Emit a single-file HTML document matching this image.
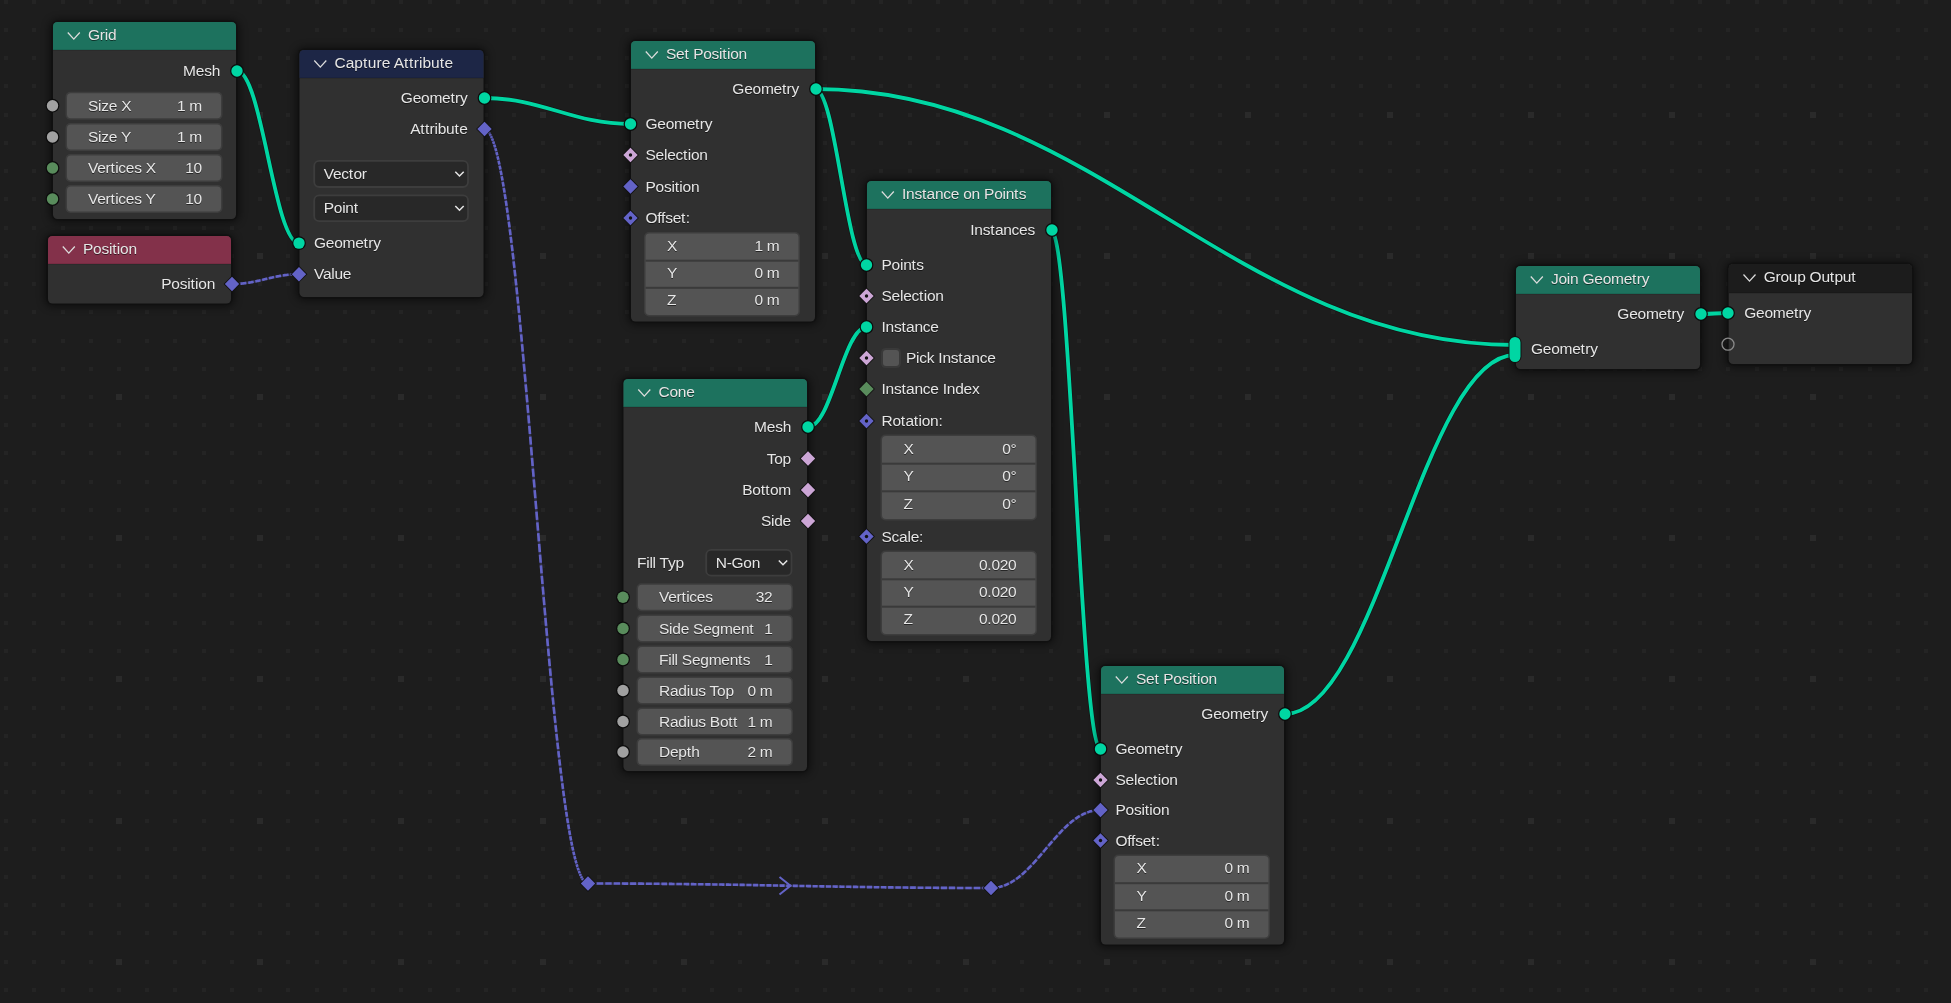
<!DOCTYPE html><html><head><meta charset="utf-8"><style>html,body{margin:0;padding:0;background:#1d1d1d;width:1951px;height:1003px;overflow:hidden}</style></head><body><svg width="1951" height="1003" viewBox="0 0 1951 1003" style="display:block;font-family:'Liberation Sans', sans-serif" opacity="0.999" letter-spacing="-0.25">
<defs><filter id="sh" x="-20%" y="-20%" width="140%" height="140%"><feGaussianBlur stdDeviation="4.5"/></filter>
</defs>
<rect width="1951" height="1003" fill="#1d1d1d"/>
<path d="M4 0h4v4h-4zM4 28h4v4h-4zM4 56h4v4h-4zM4 84h4v4h-4zM4 113h4v4h-4zM4 141h4v4h-4zM4 169h4v4h-4zM4 197h4v4h-4zM4 226h4v4h-4zM4 254h4v4h-4zM4 282h4v4h-4zM4 310h4v4h-4zM4 339h4v4h-4zM4 367h4v4h-4zM4 395h4v4h-4zM4 423h4v4h-4zM4 451h4v4h-4zM4 480h4v4h-4zM4 508h4v4h-4zM4 536h4v4h-4zM4 564h4v4h-4zM4 593h4v4h-4zM4 621h4v4h-4zM4 649h4v4h-4zM4 677h4v4h-4zM4 706h4v4h-4zM4 734h4v4h-4zM4 762h4v4h-4zM4 790h4v4h-4zM4 819h4v4h-4zM4 847h4v4h-4zM4 875h4v4h-4zM4 903h4v4h-4zM4 931h4v4h-4zM4 960h4v4h-4zM4 988h4v4h-4zM32 0h4v4h-4zM32 28h4v4h-4zM32 56h4v4h-4zM32 84h4v4h-4zM32 113h4v4h-4zM32 141h4v4h-4zM32 169h4v4h-4zM32 197h4v4h-4zM32 226h4v4h-4zM32 254h4v4h-4zM32 282h4v4h-4zM32 310h4v4h-4zM32 339h4v4h-4zM32 367h4v4h-4zM32 395h4v4h-4zM32 423h4v4h-4zM32 451h4v4h-4zM32 480h4v4h-4zM32 508h4v4h-4zM32 536h4v4h-4zM32 564h4v4h-4zM32 593h4v4h-4zM32 621h4v4h-4zM32 649h4v4h-4zM32 677h4v4h-4zM32 706h4v4h-4zM32 734h4v4h-4zM32 762h4v4h-4zM32 790h4v4h-4zM32 819h4v4h-4zM32 847h4v4h-4zM32 875h4v4h-4zM32 903h4v4h-4zM32 931h4v4h-4zM32 960h4v4h-4zM32 988h4v4h-4zM61 0h4v4h-4zM61 28h4v4h-4zM61 56h4v4h-4zM61 84h4v4h-4zM61 113h4v4h-4zM61 141h4v4h-4zM61 169h4v4h-4zM61 197h4v4h-4zM61 226h4v4h-4zM61 254h4v4h-4zM61 282h4v4h-4zM61 310h4v4h-4zM61 339h4v4h-4zM61 367h4v4h-4zM61 395h4v4h-4zM61 423h4v4h-4zM61 451h4v4h-4zM61 480h4v4h-4zM61 508h4v4h-4zM61 536h4v4h-4zM61 564h4v4h-4zM61 593h4v4h-4zM61 621h4v4h-4zM61 649h4v4h-4zM61 677h4v4h-4zM61 706h4v4h-4zM61 734h4v4h-4zM61 762h4v4h-4zM61 790h4v4h-4zM61 819h4v4h-4zM61 847h4v4h-4zM61 875h4v4h-4zM61 903h4v4h-4zM61 931h4v4h-4zM61 960h4v4h-4zM61 988h4v4h-4zM89 0h4v4h-4zM89 28h4v4h-4zM89 56h4v4h-4zM89 84h4v4h-4zM89 113h4v4h-4zM89 141h4v4h-4zM89 169h4v4h-4zM89 197h4v4h-4zM89 226h4v4h-4zM89 254h4v4h-4zM89 282h4v4h-4zM89 310h4v4h-4zM89 339h4v4h-4zM89 367h4v4h-4zM89 395h4v4h-4zM89 423h4v4h-4zM89 451h4v4h-4zM89 480h4v4h-4zM89 508h4v4h-4zM89 536h4v4h-4zM89 564h4v4h-4zM89 593h4v4h-4zM89 621h4v4h-4zM89 649h4v4h-4zM89 677h4v4h-4zM89 706h4v4h-4zM89 734h4v4h-4zM89 762h4v4h-4zM89 790h4v4h-4zM89 819h4v4h-4zM89 847h4v4h-4zM89 875h4v4h-4zM89 903h4v4h-4zM89 931h4v4h-4zM89 960h4v4h-4zM89 988h4v4h-4zM117 0h4v4h-4zM117 28h4v4h-4zM117 56h4v4h-4zM117 84h4v4h-4zM117 141h4v4h-4zM117 169h4v4h-4zM117 197h4v4h-4zM117 226h4v4h-4zM117 282h4v4h-4zM117 310h4v4h-4zM117 339h4v4h-4zM117 367h4v4h-4zM117 423h4v4h-4zM117 451h4v4h-4zM117 480h4v4h-4zM117 508h4v4h-4zM117 564h4v4h-4zM117 593h4v4h-4zM117 621h4v4h-4zM117 649h4v4h-4zM117 706h4v4h-4zM117 734h4v4h-4zM117 762h4v4h-4zM117 790h4v4h-4zM117 847h4v4h-4zM117 875h4v4h-4zM117 903h4v4h-4zM117 931h4v4h-4zM117 988h4v4h-4zM145 0h4v4h-4zM145 28h4v4h-4zM145 56h4v4h-4zM145 84h4v4h-4zM145 113h4v4h-4zM145 141h4v4h-4zM145 169h4v4h-4zM145 197h4v4h-4zM145 226h4v4h-4zM145 254h4v4h-4zM145 282h4v4h-4zM145 310h4v4h-4zM145 339h4v4h-4zM145 367h4v4h-4zM145 395h4v4h-4zM145 423h4v4h-4zM145 451h4v4h-4zM145 480h4v4h-4zM145 508h4v4h-4zM145 536h4v4h-4zM145 564h4v4h-4zM145 593h4v4h-4zM145 621h4v4h-4zM145 649h4v4h-4zM145 677h4v4h-4zM145 706h4v4h-4zM145 734h4v4h-4zM145 762h4v4h-4zM145 790h4v4h-4zM145 819h4v4h-4zM145 847h4v4h-4zM145 875h4v4h-4zM145 903h4v4h-4zM145 931h4v4h-4zM145 960h4v4h-4zM145 988h4v4h-4zM173 0h4v4h-4zM173 28h4v4h-4zM173 56h4v4h-4zM173 84h4v4h-4zM173 113h4v4h-4zM173 141h4v4h-4zM173 169h4v4h-4zM173 197h4v4h-4zM173 226h4v4h-4zM173 254h4v4h-4zM173 282h4v4h-4zM173 310h4v4h-4zM173 339h4v4h-4zM173 367h4v4h-4zM173 395h4v4h-4zM173 423h4v4h-4zM173 451h4v4h-4zM173 480h4v4h-4zM173 508h4v4h-4zM173 536h4v4h-4zM173 564h4v4h-4zM173 593h4v4h-4zM173 621h4v4h-4zM173 649h4v4h-4zM173 677h4v4h-4zM173 706h4v4h-4zM173 734h4v4h-4zM173 762h4v4h-4zM173 790h4v4h-4zM173 819h4v4h-4zM173 847h4v4h-4zM173 875h4v4h-4zM173 903h4v4h-4zM173 931h4v4h-4zM173 960h4v4h-4zM173 988h4v4h-4zM202 0h4v4h-4zM202 28h4v4h-4zM202 56h4v4h-4zM202 84h4v4h-4zM202 113h4v4h-4zM202 141h4v4h-4zM202 169h4v4h-4zM202 197h4v4h-4zM202 226h4v4h-4zM202 254h4v4h-4zM202 282h4v4h-4zM202 310h4v4h-4zM202 339h4v4h-4zM202 367h4v4h-4zM202 395h4v4h-4zM202 423h4v4h-4zM202 451h4v4h-4zM202 480h4v4h-4zM202 508h4v4h-4zM202 536h4v4h-4zM202 564h4v4h-4zM202 593h4v4h-4zM202 621h4v4h-4zM202 649h4v4h-4zM202 677h4v4h-4zM202 706h4v4h-4zM202 734h4v4h-4zM202 762h4v4h-4zM202 790h4v4h-4zM202 819h4v4h-4zM202 847h4v4h-4zM202 875h4v4h-4zM202 903h4v4h-4zM202 931h4v4h-4zM202 960h4v4h-4zM202 988h4v4h-4zM230 0h4v4h-4zM230 28h4v4h-4zM230 56h4v4h-4zM230 84h4v4h-4zM230 113h4v4h-4zM230 141h4v4h-4zM230 169h4v4h-4zM230 197h4v4h-4zM230 226h4v4h-4zM230 254h4v4h-4zM230 282h4v4h-4zM230 310h4v4h-4zM230 339h4v4h-4zM230 367h4v4h-4zM230 395h4v4h-4zM230 423h4v4h-4zM230 451h4v4h-4zM230 480h4v4h-4zM230 508h4v4h-4zM230 536h4v4h-4zM230 564h4v4h-4zM230 593h4v4h-4zM230 621h4v4h-4zM230 649h4v4h-4zM230 677h4v4h-4zM230 706h4v4h-4zM230 734h4v4h-4zM230 762h4v4h-4zM230 790h4v4h-4zM230 819h4v4h-4zM230 847h4v4h-4zM230 875h4v4h-4zM230 903h4v4h-4zM230 931h4v4h-4zM230 960h4v4h-4zM230 988h4v4h-4zM258 0h4v4h-4zM258 28h4v4h-4zM258 56h4v4h-4zM258 84h4v4h-4zM258 141h4v4h-4zM258 169h4v4h-4zM258 197h4v4h-4zM258 226h4v4h-4zM258 282h4v4h-4zM258 310h4v4h-4zM258 339h4v4h-4zM258 367h4v4h-4zM258 423h4v4h-4zM258 451h4v4h-4zM258 480h4v4h-4zM258 508h4v4h-4zM258 564h4v4h-4zM258 593h4v4h-4zM258 621h4v4h-4zM258 649h4v4h-4zM258 706h4v4h-4zM258 734h4v4h-4zM258 762h4v4h-4zM258 790h4v4h-4zM258 847h4v4h-4zM258 875h4v4h-4zM258 903h4v4h-4zM258 931h4v4h-4zM258 988h4v4h-4zM286 0h4v4h-4zM286 28h4v4h-4zM286 56h4v4h-4zM286 84h4v4h-4zM286 113h4v4h-4zM286 141h4v4h-4zM286 169h4v4h-4zM286 197h4v4h-4zM286 226h4v4h-4zM286 254h4v4h-4zM286 282h4v4h-4zM286 310h4v4h-4zM286 339h4v4h-4zM286 367h4v4h-4zM286 395h4v4h-4zM286 423h4v4h-4zM286 451h4v4h-4zM286 480h4v4h-4zM286 508h4v4h-4zM286 536h4v4h-4zM286 564h4v4h-4zM286 593h4v4h-4zM286 621h4v4h-4zM286 649h4v4h-4zM286 677h4v4h-4zM286 706h4v4h-4zM286 734h4v4h-4zM286 762h4v4h-4zM286 790h4v4h-4zM286 819h4v4h-4zM286 847h4v4h-4zM286 875h4v4h-4zM286 903h4v4h-4zM286 931h4v4h-4zM286 960h4v4h-4zM286 988h4v4h-4zM315 0h4v4h-4zM315 28h4v4h-4zM315 56h4v4h-4zM315 84h4v4h-4zM315 113h4v4h-4zM315 141h4v4h-4zM315 169h4v4h-4zM315 197h4v4h-4zM315 226h4v4h-4zM315 254h4v4h-4zM315 282h4v4h-4zM315 310h4v4h-4zM315 339h4v4h-4zM315 367h4v4h-4zM315 395h4v4h-4zM315 423h4v4h-4zM315 451h4v4h-4zM315 480h4v4h-4zM315 508h4v4h-4zM315 536h4v4h-4zM315 564h4v4h-4zM315 593h4v4h-4zM315 621h4v4h-4zM315 649h4v4h-4zM315 677h4v4h-4zM315 706h4v4h-4zM315 734h4v4h-4zM315 762h4v4h-4zM315 790h4v4h-4zM315 819h4v4h-4zM315 847h4v4h-4zM315 875h4v4h-4zM315 903h4v4h-4zM315 931h4v4h-4zM315 960h4v4h-4zM315 988h4v4h-4zM343 0h4v4h-4zM343 28h4v4h-4zM343 56h4v4h-4zM343 84h4v4h-4zM343 113h4v4h-4zM343 141h4v4h-4zM343 169h4v4h-4zM343 197h4v4h-4zM343 226h4v4h-4zM343 254h4v4h-4zM343 282h4v4h-4zM343 310h4v4h-4zM343 339h4v4h-4zM343 367h4v4h-4zM343 395h4v4h-4zM343 423h4v4h-4zM343 451h4v4h-4zM343 480h4v4h-4zM343 508h4v4h-4zM343 536h4v4h-4zM343 564h4v4h-4zM343 593h4v4h-4zM343 621h4v4h-4zM343 649h4v4h-4zM343 677h4v4h-4zM343 706h4v4h-4zM343 734h4v4h-4zM343 762h4v4h-4zM343 790h4v4h-4zM343 819h4v4h-4zM343 847h4v4h-4zM343 875h4v4h-4zM343 903h4v4h-4zM343 931h4v4h-4zM343 960h4v4h-4zM343 988h4v4h-4zM371 0h4v4h-4zM371 28h4v4h-4zM371 56h4v4h-4zM371 84h4v4h-4zM371 113h4v4h-4zM371 141h4v4h-4zM371 169h4v4h-4zM371 197h4v4h-4zM371 226h4v4h-4zM371 254h4v4h-4zM371 282h4v4h-4zM371 310h4v4h-4zM371 339h4v4h-4zM371 367h4v4h-4zM371 395h4v4h-4zM371 423h4v4h-4zM371 451h4v4h-4zM371 480h4v4h-4zM371 508h4v4h-4zM371 536h4v4h-4zM371 564h4v4h-4zM371 593h4v4h-4zM371 621h4v4h-4zM371 649h4v4h-4zM371 677h4v4h-4zM371 706h4v4h-4zM371 734h4v4h-4zM371 762h4v4h-4zM371 790h4v4h-4zM371 819h4v4h-4zM371 847h4v4h-4zM371 875h4v4h-4zM371 903h4v4h-4zM371 931h4v4h-4zM371 960h4v4h-4zM371 988h4v4h-4zM399 0h4v4h-4zM399 28h4v4h-4zM399 56h4v4h-4zM399 84h4v4h-4zM399 141h4v4h-4zM399 169h4v4h-4zM399 197h4v4h-4zM399 226h4v4h-4zM399 282h4v4h-4zM399 310h4v4h-4zM399 339h4v4h-4zM399 367h4v4h-4zM399 423h4v4h-4zM399 451h4v4h-4zM399 480h4v4h-4zM399 508h4v4h-4zM399 564h4v4h-4zM399 593h4v4h-4zM399 621h4v4h-4zM399 649h4v4h-4zM399 706h4v4h-4zM399 734h4v4h-4zM399 762h4v4h-4zM399 790h4v4h-4zM399 847h4v4h-4zM399 875h4v4h-4zM399 903h4v4h-4zM399 931h4v4h-4zM399 988h4v4h-4zM428 0h4v4h-4zM428 28h4v4h-4zM428 56h4v4h-4zM428 84h4v4h-4zM428 113h4v4h-4zM428 141h4v4h-4zM428 169h4v4h-4zM428 197h4v4h-4zM428 226h4v4h-4zM428 254h4v4h-4zM428 282h4v4h-4zM428 310h4v4h-4zM428 339h4v4h-4zM428 367h4v4h-4zM428 395h4v4h-4zM428 423h4v4h-4zM428 451h4v4h-4zM428 480h4v4h-4zM428 508h4v4h-4zM428 536h4v4h-4zM428 564h4v4h-4zM428 593h4v4h-4zM428 621h4v4h-4zM428 649h4v4h-4zM428 677h4v4h-4zM428 706h4v4h-4zM428 734h4v4h-4zM428 762h4v4h-4zM428 790h4v4h-4zM428 819h4v4h-4zM428 847h4v4h-4zM428 875h4v4h-4zM428 903h4v4h-4zM428 931h4v4h-4zM428 960h4v4h-4zM428 988h4v4h-4zM456 0h4v4h-4zM456 28h4v4h-4zM456 56h4v4h-4zM456 84h4v4h-4zM456 113h4v4h-4zM456 141h4v4h-4zM456 169h4v4h-4zM456 197h4v4h-4zM456 226h4v4h-4zM456 254h4v4h-4zM456 282h4v4h-4zM456 310h4v4h-4zM456 339h4v4h-4zM456 367h4v4h-4zM456 395h4v4h-4zM456 423h4v4h-4zM456 451h4v4h-4zM456 480h4v4h-4zM456 508h4v4h-4zM456 536h4v4h-4zM456 564h4v4h-4zM456 593h4v4h-4zM456 621h4v4h-4zM456 649h4v4h-4zM456 677h4v4h-4zM456 706h4v4h-4zM456 734h4v4h-4zM456 762h4v4h-4zM456 790h4v4h-4zM456 819h4v4h-4zM456 847h4v4h-4zM456 875h4v4h-4zM456 903h4v4h-4zM456 931h4v4h-4zM456 960h4v4h-4zM456 988h4v4h-4zM484 0h4v4h-4zM484 28h4v4h-4zM484 56h4v4h-4zM484 84h4v4h-4zM484 113h4v4h-4zM484 141h4v4h-4zM484 169h4v4h-4zM484 197h4v4h-4zM484 226h4v4h-4zM484 254h4v4h-4zM484 282h4v4h-4zM484 310h4v4h-4zM484 339h4v4h-4zM484 367h4v4h-4zM484 395h4v4h-4zM484 423h4v4h-4zM484 451h4v4h-4zM484 480h4v4h-4zM484 508h4v4h-4zM484 536h4v4h-4zM484 564h4v4h-4zM484 593h4v4h-4zM484 621h4v4h-4zM484 649h4v4h-4zM484 677h4v4h-4zM484 706h4v4h-4zM484 734h4v4h-4zM484 762h4v4h-4zM484 790h4v4h-4zM484 819h4v4h-4zM484 847h4v4h-4zM484 875h4v4h-4zM484 903h4v4h-4zM484 931h4v4h-4zM484 960h4v4h-4zM484 988h4v4h-4zM512 0h4v4h-4zM512 28h4v4h-4zM512 56h4v4h-4zM512 84h4v4h-4zM512 113h4v4h-4zM512 141h4v4h-4zM512 169h4v4h-4zM512 197h4v4h-4zM512 226h4v4h-4zM512 254h4v4h-4zM512 282h4v4h-4zM512 310h4v4h-4zM512 339h4v4h-4zM512 367h4v4h-4zM512 395h4v4h-4zM512 423h4v4h-4zM512 451h4v4h-4zM512 480h4v4h-4zM512 508h4v4h-4zM512 536h4v4h-4zM512 564h4v4h-4zM512 593h4v4h-4zM512 621h4v4h-4zM512 649h4v4h-4zM512 677h4v4h-4zM512 706h4v4h-4zM512 734h4v4h-4zM512 762h4v4h-4zM512 790h4v4h-4zM512 819h4v4h-4zM512 847h4v4h-4zM512 875h4v4h-4zM512 903h4v4h-4zM512 931h4v4h-4zM512 960h4v4h-4zM512 988h4v4h-4zM541 0h4v4h-4zM541 28h4v4h-4zM541 56h4v4h-4zM541 84h4v4h-4zM541 141h4v4h-4zM541 169h4v4h-4zM541 197h4v4h-4zM541 226h4v4h-4zM541 282h4v4h-4zM541 310h4v4h-4zM541 339h4v4h-4zM541 367h4v4h-4zM541 423h4v4h-4zM541 451h4v4h-4zM541 480h4v4h-4zM541 508h4v4h-4zM541 564h4v4h-4zM541 593h4v4h-4zM541 621h4v4h-4zM541 649h4v4h-4zM541 706h4v4h-4zM541 734h4v4h-4zM541 762h4v4h-4zM541 790h4v4h-4zM541 847h4v4h-4zM541 875h4v4h-4zM541 903h4v4h-4zM541 931h4v4h-4zM541 988h4v4h-4zM569 0h4v4h-4zM569 28h4v4h-4zM569 56h4v4h-4zM569 84h4v4h-4zM569 113h4v4h-4zM569 141h4v4h-4zM569 169h4v4h-4zM569 197h4v4h-4zM569 226h4v4h-4zM569 254h4v4h-4zM569 282h4v4h-4zM569 310h4v4h-4zM569 339h4v4h-4zM569 367h4v4h-4zM569 395h4v4h-4zM569 423h4v4h-4zM569 451h4v4h-4zM569 480h4v4h-4zM569 508h4v4h-4zM569 536h4v4h-4zM569 564h4v4h-4zM569 593h4v4h-4zM569 621h4v4h-4zM569 649h4v4h-4zM569 677h4v4h-4zM569 706h4v4h-4zM569 734h4v4h-4zM569 762h4v4h-4zM569 790h4v4h-4zM569 819h4v4h-4zM569 847h4v4h-4zM569 875h4v4h-4zM569 903h4v4h-4zM569 931h4v4h-4zM569 960h4v4h-4zM569 988h4v4h-4zM597 0h4v4h-4zM597 28h4v4h-4zM597 56h4v4h-4zM597 84h4v4h-4zM597 113h4v4h-4zM597 141h4v4h-4zM597 169h4v4h-4zM597 197h4v4h-4zM597 226h4v4h-4zM597 254h4v4h-4zM597 282h4v4h-4zM597 310h4v4h-4zM597 339h4v4h-4zM597 367h4v4h-4zM597 395h4v4h-4zM597 423h4v4h-4zM597 451h4v4h-4zM597 480h4v4h-4zM597 508h4v4h-4zM597 536h4v4h-4zM597 564h4v4h-4zM597 593h4v4h-4zM597 621h4v4h-4zM597 649h4v4h-4zM597 677h4v4h-4zM597 706h4v4h-4zM597 734h4v4h-4zM597 762h4v4h-4zM597 790h4v4h-4zM597 819h4v4h-4zM597 847h4v4h-4zM597 875h4v4h-4zM597 903h4v4h-4zM597 931h4v4h-4zM597 960h4v4h-4zM597 988h4v4h-4zM625 0h4v4h-4zM625 28h4v4h-4zM625 56h4v4h-4zM625 84h4v4h-4zM625 113h4v4h-4zM625 141h4v4h-4zM625 169h4v4h-4zM625 197h4v4h-4zM625 226h4v4h-4zM625 254h4v4h-4zM625 282h4v4h-4zM625 310h4v4h-4zM625 339h4v4h-4zM625 367h4v4h-4zM625 395h4v4h-4zM625 423h4v4h-4zM625 451h4v4h-4zM625 480h4v4h-4zM625 508h4v4h-4zM625 536h4v4h-4zM625 564h4v4h-4zM625 593h4v4h-4zM625 621h4v4h-4zM625 649h4v4h-4zM625 677h4v4h-4zM625 706h4v4h-4zM625 734h4v4h-4zM625 762h4v4h-4zM625 790h4v4h-4zM625 819h4v4h-4zM625 847h4v4h-4zM625 875h4v4h-4zM625 903h4v4h-4zM625 931h4v4h-4zM625 960h4v4h-4zM625 988h4v4h-4zM653 0h4v4h-4zM653 28h4v4h-4zM653 56h4v4h-4zM653 84h4v4h-4zM653 113h4v4h-4zM653 141h4v4h-4zM653 169h4v4h-4zM653 197h4v4h-4zM653 226h4v4h-4zM653 254h4v4h-4zM653 282h4v4h-4zM653 310h4v4h-4zM653 339h4v4h-4zM653 367h4v4h-4zM653 395h4v4h-4zM653 423h4v4h-4zM653 451h4v4h-4zM653 480h4v4h-4zM653 508h4v4h-4zM653 536h4v4h-4zM653 564h4v4h-4zM653 593h4v4h-4zM653 621h4v4h-4zM653 649h4v4h-4zM653 677h4v4h-4zM653 706h4v4h-4zM653 734h4v4h-4zM653 762h4v4h-4zM653 790h4v4h-4zM653 819h4v4h-4zM653 847h4v4h-4zM653 875h4v4h-4zM653 903h4v4h-4zM653 931h4v4h-4zM653 960h4v4h-4zM653 988h4v4h-4zM682 0h4v4h-4zM682 28h4v4h-4zM682 56h4v4h-4zM682 84h4v4h-4zM682 141h4v4h-4zM682 169h4v4h-4zM682 197h4v4h-4zM682 226h4v4h-4zM682 282h4v4h-4zM682 310h4v4h-4zM682 339h4v4h-4zM682 367h4v4h-4zM682 423h4v4h-4zM682 451h4v4h-4zM682 480h4v4h-4zM682 508h4v4h-4zM682 564h4v4h-4zM682 593h4v4h-4zM682 621h4v4h-4zM682 649h4v4h-4zM682 706h4v4h-4zM682 734h4v4h-4zM682 762h4v4h-4zM682 790h4v4h-4zM682 847h4v4h-4zM682 875h4v4h-4zM682 903h4v4h-4zM682 931h4v4h-4zM682 988h4v4h-4zM710 0h4v4h-4zM710 28h4v4h-4zM710 56h4v4h-4zM710 84h4v4h-4zM710 113h4v4h-4zM710 141h4v4h-4zM710 169h4v4h-4zM710 197h4v4h-4zM710 226h4v4h-4zM710 254h4v4h-4zM710 282h4v4h-4zM710 310h4v4h-4zM710 339h4v4h-4zM710 367h4v4h-4zM710 395h4v4h-4zM710 423h4v4h-4zM710 451h4v4h-4zM710 480h4v4h-4zM710 508h4v4h-4zM710 536h4v4h-4zM710 564h4v4h-4zM710 593h4v4h-4zM710 621h4v4h-4zM710 649h4v4h-4zM710 677h4v4h-4zM710 706h4v4h-4zM710 734h4v4h-4zM710 762h4v4h-4zM710 790h4v4h-4zM710 819h4v4h-4zM710 847h4v4h-4zM710 875h4v4h-4zM710 903h4v4h-4zM710 931h4v4h-4zM710 960h4v4h-4zM710 988h4v4h-4zM738 0h4v4h-4zM738 28h4v4h-4zM738 56h4v4h-4zM738 84h4v4h-4zM738 113h4v4h-4zM738 141h4v4h-4zM738 169h4v4h-4zM738 197h4v4h-4zM738 226h4v4h-4zM738 254h4v4h-4zM738 282h4v4h-4zM738 310h4v4h-4zM738 339h4v4h-4zM738 367h4v4h-4zM738 395h4v4h-4zM738 423h4v4h-4zM738 451h4v4h-4zM738 480h4v4h-4zM738 508h4v4h-4zM738 536h4v4h-4zM738 564h4v4h-4zM738 593h4v4h-4zM738 621h4v4h-4zM738 649h4v4h-4zM738 677h4v4h-4zM738 706h4v4h-4zM738 734h4v4h-4zM738 762h4v4h-4zM738 790h4v4h-4zM738 819h4v4h-4zM738 847h4v4h-4zM738 875h4v4h-4zM738 903h4v4h-4zM738 931h4v4h-4zM738 960h4v4h-4zM738 988h4v4h-4zM766 0h4v4h-4zM766 28h4v4h-4zM766 56h4v4h-4zM766 84h4v4h-4zM766 113h4v4h-4zM766 141h4v4h-4zM766 169h4v4h-4zM766 197h4v4h-4zM766 226h4v4h-4zM766 254h4v4h-4zM766 282h4v4h-4zM766 310h4v4h-4zM766 339h4v4h-4zM766 367h4v4h-4zM766 395h4v4h-4zM766 423h4v4h-4zM766 451h4v4h-4zM766 480h4v4h-4zM766 508h4v4h-4zM766 536h4v4h-4zM766 564h4v4h-4zM766 593h4v4h-4zM766 621h4v4h-4zM766 649h4v4h-4zM766 677h4v4h-4zM766 706h4v4h-4zM766 734h4v4h-4zM766 762h4v4h-4zM766 790h4v4h-4zM766 819h4v4h-4zM766 847h4v4h-4zM766 875h4v4h-4zM766 903h4v4h-4zM766 931h4v4h-4zM766 960h4v4h-4zM766 988h4v4h-4zM795 0h4v4h-4zM795 28h4v4h-4zM795 56h4v4h-4zM795 84h4v4h-4zM795 113h4v4h-4zM795 141h4v4h-4zM795 169h4v4h-4zM795 197h4v4h-4zM795 226h4v4h-4zM795 254h4v4h-4zM795 282h4v4h-4zM795 310h4v4h-4zM795 339h4v4h-4zM795 367h4v4h-4zM795 395h4v4h-4zM795 423h4v4h-4zM795 451h4v4h-4zM795 480h4v4h-4zM795 508h4v4h-4zM795 536h4v4h-4zM795 564h4v4h-4zM795 593h4v4h-4zM795 621h4v4h-4zM795 649h4v4h-4zM795 677h4v4h-4zM795 706h4v4h-4zM795 734h4v4h-4zM795 762h4v4h-4zM795 790h4v4h-4zM795 819h4v4h-4zM795 847h4v4h-4zM795 875h4v4h-4zM795 903h4v4h-4zM795 931h4v4h-4zM795 960h4v4h-4zM795 988h4v4h-4zM823 0h4v4h-4zM823 28h4v4h-4zM823 56h4v4h-4zM823 84h4v4h-4zM823 141h4v4h-4zM823 169h4v4h-4zM823 197h4v4h-4zM823 226h4v4h-4zM823 282h4v4h-4zM823 310h4v4h-4zM823 339h4v4h-4zM823 367h4v4h-4zM823 423h4v4h-4zM823 451h4v4h-4zM823 480h4v4h-4zM823 508h4v4h-4zM823 564h4v4h-4zM823 593h4v4h-4zM823 621h4v4h-4zM823 649h4v4h-4zM823 706h4v4h-4zM823 734h4v4h-4zM823 762h4v4h-4zM823 790h4v4h-4zM823 847h4v4h-4zM823 875h4v4h-4zM823 903h4v4h-4zM823 931h4v4h-4zM823 988h4v4h-4zM851 0h4v4h-4zM851 28h4v4h-4zM851 56h4v4h-4zM851 84h4v4h-4zM851 113h4v4h-4zM851 141h4v4h-4zM851 169h4v4h-4zM851 197h4v4h-4zM851 226h4v4h-4zM851 254h4v4h-4zM851 282h4v4h-4zM851 310h4v4h-4zM851 339h4v4h-4zM851 367h4v4h-4zM851 395h4v4h-4zM851 423h4v4h-4zM851 451h4v4h-4zM851 480h4v4h-4zM851 508h4v4h-4zM851 536h4v4h-4zM851 564h4v4h-4zM851 593h4v4h-4zM851 621h4v4h-4zM851 649h4v4h-4zM851 677h4v4h-4zM851 706h4v4h-4zM851 734h4v4h-4zM851 762h4v4h-4zM851 790h4v4h-4zM851 819h4v4h-4zM851 847h4v4h-4zM851 875h4v4h-4zM851 903h4v4h-4zM851 931h4v4h-4zM851 960h4v4h-4zM851 988h4v4h-4zM879 0h4v4h-4zM879 28h4v4h-4zM879 56h4v4h-4zM879 84h4v4h-4zM879 113h4v4h-4zM879 141h4v4h-4zM879 169h4v4h-4zM879 197h4v4h-4zM879 226h4v4h-4zM879 254h4v4h-4zM879 282h4v4h-4zM879 310h4v4h-4zM879 339h4v4h-4zM879 367h4v4h-4zM879 395h4v4h-4zM879 423h4v4h-4zM879 451h4v4h-4zM879 480h4v4h-4zM879 508h4v4h-4zM879 536h4v4h-4zM879 564h4v4h-4zM879 593h4v4h-4zM879 621h4v4h-4zM879 649h4v4h-4zM879 677h4v4h-4zM879 706h4v4h-4zM879 734h4v4h-4zM879 762h4v4h-4zM879 790h4v4h-4zM879 819h4v4h-4zM879 847h4v4h-4zM879 875h4v4h-4zM879 903h4v4h-4zM879 931h4v4h-4zM879 960h4v4h-4zM879 988h4v4h-4zM908 0h4v4h-4zM908 28h4v4h-4zM908 56h4v4h-4zM908 84h4v4h-4zM908 113h4v4h-4zM908 141h4v4h-4zM908 169h4v4h-4zM908 197h4v4h-4zM908 226h4v4h-4zM908 254h4v4h-4zM908 282h4v4h-4zM908 310h4v4h-4zM908 339h4v4h-4zM908 367h4v4h-4zM908 395h4v4h-4zM908 423h4v4h-4zM908 451h4v4h-4zM908 480h4v4h-4zM908 508h4v4h-4zM908 536h4v4h-4zM908 564h4v4h-4zM908 593h4v4h-4zM908 621h4v4h-4zM908 649h4v4h-4zM908 677h4v4h-4zM908 706h4v4h-4zM908 734h4v4h-4zM908 762h4v4h-4zM908 790h4v4h-4zM908 819h4v4h-4zM908 847h4v4h-4zM908 875h4v4h-4zM908 903h4v4h-4zM908 931h4v4h-4zM908 960h4v4h-4zM908 988h4v4h-4zM936 0h4v4h-4zM936 28h4v4h-4zM936 56h4v4h-4zM936 84h4v4h-4zM936 113h4v4h-4zM936 141h4v4h-4zM936 169h4v4h-4zM936 197h4v4h-4zM936 226h4v4h-4zM936 254h4v4h-4zM936 282h4v4h-4zM936 310h4v4h-4zM936 339h4v4h-4zM936 367h4v4h-4zM936 395h4v4h-4zM936 423h4v4h-4zM936 451h4v4h-4zM936 480h4v4h-4zM936 508h4v4h-4zM936 536h4v4h-4zM936 564h4v4h-4zM936 593h4v4h-4zM936 621h4v4h-4zM936 649h4v4h-4zM936 677h4v4h-4zM936 706h4v4h-4zM936 734h4v4h-4zM936 762h4v4h-4zM936 790h4v4h-4zM936 819h4v4h-4zM936 847h4v4h-4zM936 875h4v4h-4zM936 903h4v4h-4zM936 931h4v4h-4zM936 960h4v4h-4zM936 988h4v4h-4zM964 0h4v4h-4zM964 28h4v4h-4zM964 56h4v4h-4zM964 84h4v4h-4zM964 141h4v4h-4zM964 169h4v4h-4zM964 197h4v4h-4zM964 226h4v4h-4zM964 282h4v4h-4zM964 310h4v4h-4zM964 339h4v4h-4zM964 367h4v4h-4zM964 423h4v4h-4zM964 451h4v4h-4zM964 480h4v4h-4zM964 508h4v4h-4zM964 564h4v4h-4zM964 593h4v4h-4zM964 621h4v4h-4zM964 649h4v4h-4zM964 706h4v4h-4zM964 734h4v4h-4zM964 762h4v4h-4zM964 790h4v4h-4zM964 847h4v4h-4zM964 875h4v4h-4zM964 903h4v4h-4zM964 931h4v4h-4zM964 988h4v4h-4zM992 0h4v4h-4zM992 28h4v4h-4zM992 56h4v4h-4zM992 84h4v4h-4zM992 113h4v4h-4zM992 141h4v4h-4zM992 169h4v4h-4zM992 197h4v4h-4zM992 226h4v4h-4zM992 254h4v4h-4zM992 282h4v4h-4zM992 310h4v4h-4zM992 339h4v4h-4zM992 367h4v4h-4zM992 395h4v4h-4zM992 423h4v4h-4zM992 451h4v4h-4zM992 480h4v4h-4zM992 508h4v4h-4zM992 536h4v4h-4zM992 564h4v4h-4zM992 593h4v4h-4zM992 621h4v4h-4zM992 649h4v4h-4zM992 677h4v4h-4zM992 706h4v4h-4zM992 734h4v4h-4zM992 762h4v4h-4zM992 790h4v4h-4zM992 819h4v4h-4zM992 847h4v4h-4zM992 875h4v4h-4zM992 903h4v4h-4zM992 931h4v4h-4zM992 960h4v4h-4zM992 988h4v4h-4zM1020 0h4v4h-4zM1020 28h4v4h-4zM1020 56h4v4h-4zM1020 84h4v4h-4zM1020 113h4v4h-4zM1020 141h4v4h-4zM1020 169h4v4h-4zM1020 197h4v4h-4zM1020 226h4v4h-4zM1020 254h4v4h-4zM1020 282h4v4h-4zM1020 310h4v4h-4zM1020 339h4v4h-4zM1020 367h4v4h-4zM1020 395h4v4h-4zM1020 423h4v4h-4zM1020 451h4v4h-4zM1020 480h4v4h-4zM1020 508h4v4h-4zM1020 536h4v4h-4zM1020 564h4v4h-4zM1020 593h4v4h-4zM1020 621h4v4h-4zM1020 649h4v4h-4zM1020 677h4v4h-4zM1020 706h4v4h-4zM1020 734h4v4h-4zM1020 762h4v4h-4zM1020 790h4v4h-4zM1020 819h4v4h-4zM1020 847h4v4h-4zM1020 875h4v4h-4zM1020 903h4v4h-4zM1020 931h4v4h-4zM1020 960h4v4h-4zM1020 988h4v4h-4zM1049 0h4v4h-4zM1049 28h4v4h-4zM1049 56h4v4h-4zM1049 84h4v4h-4zM1049 113h4v4h-4zM1049 141h4v4h-4zM1049 169h4v4h-4zM1049 197h4v4h-4zM1049 226h4v4h-4zM1049 254h4v4h-4zM1049 282h4v4h-4zM1049 310h4v4h-4zM1049 339h4v4h-4zM1049 367h4v4h-4zM1049 395h4v4h-4zM1049 423h4v4h-4zM1049 451h4v4h-4zM1049 480h4v4h-4zM1049 508h4v4h-4zM1049 536h4v4h-4zM1049 564h4v4h-4zM1049 593h4v4h-4zM1049 621h4v4h-4zM1049 649h4v4h-4zM1049 677h4v4h-4zM1049 706h4v4h-4zM1049 734h4v4h-4zM1049 762h4v4h-4zM1049 790h4v4h-4zM1049 819h4v4h-4zM1049 847h4v4h-4zM1049 875h4v4h-4zM1049 903h4v4h-4zM1049 931h4v4h-4zM1049 960h4v4h-4zM1049 988h4v4h-4zM1077 0h4v4h-4zM1077 28h4v4h-4zM1077 56h4v4h-4zM1077 84h4v4h-4zM1077 113h4v4h-4zM1077 141h4v4h-4zM1077 169h4v4h-4zM1077 197h4v4h-4zM1077 226h4v4h-4zM1077 254h4v4h-4zM1077 282h4v4h-4zM1077 310h4v4h-4zM1077 339h4v4h-4zM1077 367h4v4h-4zM1077 395h4v4h-4zM1077 423h4v4h-4zM1077 451h4v4h-4zM1077 480h4v4h-4zM1077 508h4v4h-4zM1077 536h4v4h-4zM1077 564h4v4h-4zM1077 593h4v4h-4zM1077 621h4v4h-4zM1077 649h4v4h-4zM1077 677h4v4h-4zM1077 706h4v4h-4zM1077 734h4v4h-4zM1077 762h4v4h-4zM1077 790h4v4h-4zM1077 819h4v4h-4zM1077 847h4v4h-4zM1077 875h4v4h-4zM1077 903h4v4h-4zM1077 931h4v4h-4zM1077 960h4v4h-4zM1077 988h4v4h-4zM1105 0h4v4h-4zM1105 28h4v4h-4zM1105 56h4v4h-4zM1105 84h4v4h-4zM1105 141h4v4h-4zM1105 169h4v4h-4zM1105 197h4v4h-4zM1105 226h4v4h-4zM1105 282h4v4h-4zM1105 310h4v4h-4zM1105 339h4v4h-4zM1105 367h4v4h-4zM1105 423h4v4h-4zM1105 451h4v4h-4zM1105 480h4v4h-4zM1105 508h4v4h-4zM1105 564h4v4h-4zM1105 593h4v4h-4zM1105 621h4v4h-4zM1105 649h4v4h-4zM1105 706h4v4h-4zM1105 734h4v4h-4zM1105 762h4v4h-4zM1105 790h4v4h-4zM1105 847h4v4h-4zM1105 875h4v4h-4zM1105 903h4v4h-4zM1105 931h4v4h-4zM1105 988h4v4h-4zM1133 0h4v4h-4zM1133 28h4v4h-4zM1133 56h4v4h-4zM1133 84h4v4h-4zM1133 113h4v4h-4zM1133 141h4v4h-4zM1133 169h4v4h-4zM1133 197h4v4h-4zM1133 226h4v4h-4zM1133 254h4v4h-4zM1133 282h4v4h-4zM1133 310h4v4h-4zM1133 339h4v4h-4zM1133 367h4v4h-4zM1133 395h4v4h-4zM1133 423h4v4h-4zM1133 451h4v4h-4zM1133 480h4v4h-4zM1133 508h4v4h-4zM1133 536h4v4h-4zM1133 564h4v4h-4zM1133 593h4v4h-4zM1133 621h4v4h-4zM1133 649h4v4h-4zM1133 677h4v4h-4zM1133 706h4v4h-4zM1133 734h4v4h-4zM1133 762h4v4h-4zM1133 790h4v4h-4zM1133 819h4v4h-4zM1133 847h4v4h-4zM1133 875h4v4h-4zM1133 903h4v4h-4zM1133 931h4v4h-4zM1133 960h4v4h-4zM1133 988h4v4h-4zM1162 0h4v4h-4zM1162 28h4v4h-4zM1162 56h4v4h-4zM1162 84h4v4h-4zM1162 113h4v4h-4zM1162 141h4v4h-4zM1162 169h4v4h-4zM1162 197h4v4h-4zM1162 226h4v4h-4zM1162 254h4v4h-4zM1162 282h4v4h-4zM1162 310h4v4h-4zM1162 339h4v4h-4zM1162 367h4v4h-4zM1162 395h4v4h-4zM1162 423h4v4h-4zM1162 451h4v4h-4zM1162 480h4v4h-4zM1162 508h4v4h-4zM1162 536h4v4h-4zM1162 564h4v4h-4zM1162 593h4v4h-4zM1162 621h4v4h-4zM1162 649h4v4h-4zM1162 677h4v4h-4zM1162 706h4v4h-4zM1162 734h4v4h-4zM1162 762h4v4h-4zM1162 790h4v4h-4zM1162 819h4v4h-4zM1162 847h4v4h-4zM1162 875h4v4h-4zM1162 903h4v4h-4zM1162 931h4v4h-4zM1162 960h4v4h-4zM1162 988h4v4h-4zM1190 0h4v4h-4zM1190 28h4v4h-4zM1190 56h4v4h-4zM1190 84h4v4h-4zM1190 113h4v4h-4zM1190 141h4v4h-4zM1190 169h4v4h-4zM1190 197h4v4h-4zM1190 226h4v4h-4zM1190 254h4v4h-4zM1190 282h4v4h-4zM1190 310h4v4h-4zM1190 339h4v4h-4zM1190 367h4v4h-4zM1190 395h4v4h-4zM1190 423h4v4h-4zM1190 451h4v4h-4zM1190 480h4v4h-4zM1190 508h4v4h-4zM1190 536h4v4h-4zM1190 564h4v4h-4zM1190 593h4v4h-4zM1190 621h4v4h-4zM1190 649h4v4h-4zM1190 677h4v4h-4zM1190 706h4v4h-4zM1190 734h4v4h-4zM1190 762h4v4h-4zM1190 790h4v4h-4zM1190 819h4v4h-4zM1190 847h4v4h-4zM1190 875h4v4h-4zM1190 903h4v4h-4zM1190 931h4v4h-4zM1190 960h4v4h-4zM1190 988h4v4h-4zM1218 0h4v4h-4zM1218 28h4v4h-4zM1218 56h4v4h-4zM1218 84h4v4h-4zM1218 113h4v4h-4zM1218 141h4v4h-4zM1218 169h4v4h-4zM1218 197h4v4h-4zM1218 226h4v4h-4zM1218 254h4v4h-4zM1218 282h4v4h-4zM1218 310h4v4h-4zM1218 339h4v4h-4zM1218 367h4v4h-4zM1218 395h4v4h-4zM1218 423h4v4h-4zM1218 451h4v4h-4zM1218 480h4v4h-4zM1218 508h4v4h-4zM1218 536h4v4h-4zM1218 564h4v4h-4zM1218 593h4v4h-4zM1218 621h4v4h-4zM1218 649h4v4h-4zM1218 677h4v4h-4zM1218 706h4v4h-4zM1218 734h4v4h-4zM1218 762h4v4h-4zM1218 790h4v4h-4zM1218 819h4v4h-4zM1218 847h4v4h-4zM1218 875h4v4h-4zM1218 903h4v4h-4zM1218 931h4v4h-4zM1218 960h4v4h-4zM1218 988h4v4h-4zM1246 0h4v4h-4zM1246 28h4v4h-4zM1246 56h4v4h-4zM1246 84h4v4h-4zM1246 141h4v4h-4zM1246 169h4v4h-4zM1246 197h4v4h-4zM1246 226h4v4h-4zM1246 282h4v4h-4zM1246 310h4v4h-4zM1246 339h4v4h-4zM1246 367h4v4h-4zM1246 423h4v4h-4zM1246 451h4v4h-4zM1246 480h4v4h-4zM1246 508h4v4h-4zM1246 564h4v4h-4zM1246 593h4v4h-4zM1246 621h4v4h-4zM1246 649h4v4h-4zM1246 706h4v4h-4zM1246 734h4v4h-4zM1246 762h4v4h-4zM1246 790h4v4h-4zM1246 847h4v4h-4zM1246 875h4v4h-4zM1246 903h4v4h-4zM1246 931h4v4h-4zM1246 988h4v4h-4zM1275 0h4v4h-4zM1275 28h4v4h-4zM1275 56h4v4h-4zM1275 84h4v4h-4zM1275 113h4v4h-4zM1275 141h4v4h-4zM1275 169h4v4h-4zM1275 197h4v4h-4zM1275 226h4v4h-4zM1275 254h4v4h-4zM1275 282h4v4h-4zM1275 310h4v4h-4zM1275 339h4v4h-4zM1275 367h4v4h-4zM1275 395h4v4h-4zM1275 423h4v4h-4zM1275 451h4v4h-4zM1275 480h4v4h-4zM1275 508h4v4h-4zM1275 536h4v4h-4zM1275 564h4v4h-4zM1275 593h4v4h-4zM1275 621h4v4h-4zM1275 649h4v4h-4zM1275 677h4v4h-4zM1275 706h4v4h-4zM1275 734h4v4h-4zM1275 762h4v4h-4zM1275 790h4v4h-4zM1275 819h4v4h-4zM1275 847h4v4h-4zM1275 875h4v4h-4zM1275 903h4v4h-4zM1275 931h4v4h-4zM1275 960h4v4h-4zM1275 988h4v4h-4zM1303 0h4v4h-4zM1303 28h4v4h-4zM1303 56h4v4h-4zM1303 84h4v4h-4zM1303 113h4v4h-4zM1303 141h4v4h-4zM1303 169h4v4h-4zM1303 197h4v4h-4zM1303 226h4v4h-4zM1303 254h4v4h-4zM1303 282h4v4h-4zM1303 310h4v4h-4zM1303 339h4v4h-4zM1303 367h4v4h-4zM1303 395h4v4h-4zM1303 423h4v4h-4zM1303 451h4v4h-4zM1303 480h4v4h-4zM1303 508h4v4h-4zM1303 536h4v4h-4zM1303 564h4v4h-4zM1303 593h4v4h-4zM1303 621h4v4h-4zM1303 649h4v4h-4zM1303 677h4v4h-4zM1303 706h4v4h-4zM1303 734h4v4h-4zM1303 762h4v4h-4zM1303 790h4v4h-4zM1303 819h4v4h-4zM1303 847h4v4h-4zM1303 875h4v4h-4zM1303 903h4v4h-4zM1303 931h4v4h-4zM1303 960h4v4h-4zM1303 988h4v4h-4zM1331 0h4v4h-4zM1331 28h4v4h-4zM1331 56h4v4h-4zM1331 84h4v4h-4zM1331 113h4v4h-4zM1331 141h4v4h-4zM1331 169h4v4h-4zM1331 197h4v4h-4zM1331 226h4v4h-4zM1331 254h4v4h-4zM1331 282h4v4h-4zM1331 310h4v4h-4zM1331 339h4v4h-4zM1331 367h4v4h-4zM1331 395h4v4h-4zM1331 423h4v4h-4zM1331 451h4v4h-4zM1331 480h4v4h-4zM1331 508h4v4h-4zM1331 536h4v4h-4zM1331 564h4v4h-4zM1331 593h4v4h-4zM1331 621h4v4h-4zM1331 649h4v4h-4zM1331 677h4v4h-4zM1331 706h4v4h-4zM1331 734h4v4h-4zM1331 762h4v4h-4zM1331 790h4v4h-4zM1331 819h4v4h-4zM1331 847h4v4h-4zM1331 875h4v4h-4zM1331 903h4v4h-4zM1331 931h4v4h-4zM1331 960h4v4h-4zM1331 988h4v4h-4zM1359 0h4v4h-4zM1359 28h4v4h-4zM1359 56h4v4h-4zM1359 84h4v4h-4zM1359 113h4v4h-4zM1359 141h4v4h-4zM1359 169h4v4h-4zM1359 197h4v4h-4zM1359 226h4v4h-4zM1359 254h4v4h-4zM1359 282h4v4h-4zM1359 310h4v4h-4zM1359 339h4v4h-4zM1359 367h4v4h-4zM1359 395h4v4h-4zM1359 423h4v4h-4zM1359 451h4v4h-4zM1359 480h4v4h-4zM1359 508h4v4h-4zM1359 536h4v4h-4zM1359 564h4v4h-4zM1359 593h4v4h-4zM1359 621h4v4h-4zM1359 649h4v4h-4zM1359 677h4v4h-4zM1359 706h4v4h-4zM1359 734h4v4h-4zM1359 762h4v4h-4zM1359 790h4v4h-4zM1359 819h4v4h-4zM1359 847h4v4h-4zM1359 875h4v4h-4zM1359 903h4v4h-4zM1359 931h4v4h-4zM1359 960h4v4h-4zM1359 988h4v4h-4zM1388 0h4v4h-4zM1388 28h4v4h-4zM1388 56h4v4h-4zM1388 84h4v4h-4zM1388 141h4v4h-4zM1388 169h4v4h-4zM1388 197h4v4h-4zM1388 226h4v4h-4zM1388 282h4v4h-4zM1388 310h4v4h-4zM1388 339h4v4h-4zM1388 367h4v4h-4zM1388 423h4v4h-4zM1388 451h4v4h-4zM1388 480h4v4h-4zM1388 508h4v4h-4zM1388 564h4v4h-4zM1388 593h4v4h-4zM1388 621h4v4h-4zM1388 649h4v4h-4zM1388 706h4v4h-4zM1388 734h4v4h-4zM1388 762h4v4h-4zM1388 790h4v4h-4zM1388 847h4v4h-4zM1388 875h4v4h-4zM1388 903h4v4h-4zM1388 931h4v4h-4zM1388 988h4v4h-4zM1416 0h4v4h-4zM1416 28h4v4h-4zM1416 56h4v4h-4zM1416 84h4v4h-4zM1416 113h4v4h-4zM1416 141h4v4h-4zM1416 169h4v4h-4zM1416 197h4v4h-4zM1416 226h4v4h-4zM1416 254h4v4h-4zM1416 282h4v4h-4zM1416 310h4v4h-4zM1416 339h4v4h-4zM1416 367h4v4h-4zM1416 395h4v4h-4zM1416 423h4v4h-4zM1416 451h4v4h-4zM1416 480h4v4h-4zM1416 508h4v4h-4zM1416 536h4v4h-4zM1416 564h4v4h-4zM1416 593h4v4h-4zM1416 621h4v4h-4zM1416 649h4v4h-4zM1416 677h4v4h-4zM1416 706h4v4h-4zM1416 734h4v4h-4zM1416 762h4v4h-4zM1416 790h4v4h-4zM1416 819h4v4h-4zM1416 847h4v4h-4zM1416 875h4v4h-4zM1416 903h4v4h-4zM1416 931h4v4h-4zM1416 960h4v4h-4zM1416 988h4v4h-4zM1444 0h4v4h-4zM1444 28h4v4h-4zM1444 56h4v4h-4zM1444 84h4v4h-4zM1444 113h4v4h-4zM1444 141h4v4h-4zM1444 169h4v4h-4zM1444 197h4v4h-4zM1444 226h4v4h-4zM1444 254h4v4h-4zM1444 282h4v4h-4zM1444 310h4v4h-4zM1444 339h4v4h-4zM1444 367h4v4h-4zM1444 395h4v4h-4zM1444 423h4v4h-4zM1444 451h4v4h-4zM1444 480h4v4h-4zM1444 508h4v4h-4zM1444 536h4v4h-4zM1444 564h4v4h-4zM1444 593h4v4h-4zM1444 621h4v4h-4zM1444 649h4v4h-4zM1444 677h4v4h-4zM1444 706h4v4h-4zM1444 734h4v4h-4zM1444 762h4v4h-4zM1444 790h4v4h-4zM1444 819h4v4h-4zM1444 847h4v4h-4zM1444 875h4v4h-4zM1444 903h4v4h-4zM1444 931h4v4h-4zM1444 960h4v4h-4zM1444 988h4v4h-4zM1472 0h4v4h-4zM1472 28h4v4h-4zM1472 56h4v4h-4zM1472 84h4v4h-4zM1472 113h4v4h-4zM1472 141h4v4h-4zM1472 169h4v4h-4zM1472 197h4v4h-4zM1472 226h4v4h-4zM1472 254h4v4h-4zM1472 282h4v4h-4zM1472 310h4v4h-4zM1472 339h4v4h-4zM1472 367h4v4h-4zM1472 395h4v4h-4zM1472 423h4v4h-4zM1472 451h4v4h-4zM1472 480h4v4h-4zM1472 508h4v4h-4zM1472 536h4v4h-4zM1472 564h4v4h-4zM1472 593h4v4h-4zM1472 621h4v4h-4zM1472 649h4v4h-4zM1472 677h4v4h-4zM1472 706h4v4h-4zM1472 734h4v4h-4zM1472 762h4v4h-4zM1472 790h4v4h-4zM1472 819h4v4h-4zM1472 847h4v4h-4zM1472 875h4v4h-4zM1472 903h4v4h-4zM1472 931h4v4h-4zM1472 960h4v4h-4zM1472 988h4v4h-4zM1500 0h4v4h-4zM1500 28h4v4h-4zM1500 56h4v4h-4zM1500 84h4v4h-4zM1500 113h4v4h-4zM1500 141h4v4h-4zM1500 169h4v4h-4zM1500 197h4v4h-4zM1500 226h4v4h-4zM1500 254h4v4h-4zM1500 282h4v4h-4zM1500 310h4v4h-4zM1500 339h4v4h-4zM1500 367h4v4h-4zM1500 395h4v4h-4zM1500 423h4v4h-4zM1500 451h4v4h-4zM1500 480h4v4h-4zM1500 508h4v4h-4zM1500 536h4v4h-4zM1500 564h4v4h-4zM1500 593h4v4h-4zM1500 621h4v4h-4zM1500 649h4v4h-4zM1500 677h4v4h-4zM1500 706h4v4h-4zM1500 734h4v4h-4zM1500 762h4v4h-4zM1500 790h4v4h-4zM1500 819h4v4h-4zM1500 847h4v4h-4zM1500 875h4v4h-4zM1500 903h4v4h-4zM1500 931h4v4h-4zM1500 960h4v4h-4zM1500 988h4v4h-4zM1529 0h4v4h-4zM1529 28h4v4h-4zM1529 56h4v4h-4zM1529 84h4v4h-4zM1529 141h4v4h-4zM1529 169h4v4h-4zM1529 197h4v4h-4zM1529 226h4v4h-4zM1529 282h4v4h-4zM1529 310h4v4h-4zM1529 339h4v4h-4zM1529 367h4v4h-4zM1529 423h4v4h-4zM1529 451h4v4h-4zM1529 480h4v4h-4zM1529 508h4v4h-4zM1529 564h4v4h-4zM1529 593h4v4h-4zM1529 621h4v4h-4zM1529 649h4v4h-4zM1529 706h4v4h-4zM1529 734h4v4h-4zM1529 762h4v4h-4zM1529 790h4v4h-4zM1529 847h4v4h-4zM1529 875h4v4h-4zM1529 903h4v4h-4zM1529 931h4v4h-4zM1529 988h4v4h-4zM1557 0h4v4h-4zM1557 28h4v4h-4zM1557 56h4v4h-4zM1557 84h4v4h-4zM1557 113h4v4h-4zM1557 141h4v4h-4zM1557 169h4v4h-4zM1557 197h4v4h-4zM1557 226h4v4h-4zM1557 254h4v4h-4zM1557 282h4v4h-4zM1557 310h4v4h-4zM1557 339h4v4h-4zM1557 367h4v4h-4zM1557 395h4v4h-4zM1557 423h4v4h-4zM1557 451h4v4h-4zM1557 480h4v4h-4zM1557 508h4v4h-4zM1557 536h4v4h-4zM1557 564h4v4h-4zM1557 593h4v4h-4zM1557 621h4v4h-4zM1557 649h4v4h-4zM1557 677h4v4h-4zM1557 706h4v4h-4zM1557 734h4v4h-4zM1557 762h4v4h-4zM1557 790h4v4h-4zM1557 819h4v4h-4zM1557 847h4v4h-4zM1557 875h4v4h-4zM1557 903h4v4h-4zM1557 931h4v4h-4zM1557 960h4v4h-4zM1557 988h4v4h-4zM1585 0h4v4h-4zM1585 28h4v4h-4zM1585 56h4v4h-4zM1585 84h4v4h-4zM1585 113h4v4h-4zM1585 141h4v4h-4zM1585 169h4v4h-4zM1585 197h4v4h-4zM1585 226h4v4h-4zM1585 254h4v4h-4zM1585 282h4v4h-4zM1585 310h4v4h-4zM1585 339h4v4h-4zM1585 367h4v4h-4zM1585 395h4v4h-4zM1585 423h4v4h-4zM1585 451h4v4h-4zM1585 480h4v4h-4zM1585 508h4v4h-4zM1585 536h4v4h-4zM1585 564h4v4h-4zM1585 593h4v4h-4zM1585 621h4v4h-4zM1585 649h4v4h-4zM1585 677h4v4h-4zM1585 706h4v4h-4zM1585 734h4v4h-4zM1585 762h4v4h-4zM1585 790h4v4h-4zM1585 819h4v4h-4zM1585 847h4v4h-4zM1585 875h4v4h-4zM1585 903h4v4h-4zM1585 931h4v4h-4zM1585 960h4v4h-4zM1585 988h4v4h-4zM1613 0h4v4h-4zM1613 28h4v4h-4zM1613 56h4v4h-4zM1613 84h4v4h-4zM1613 113h4v4h-4zM1613 141h4v4h-4zM1613 169h4v4h-4zM1613 197h4v4h-4zM1613 226h4v4h-4zM1613 254h4v4h-4zM1613 282h4v4h-4zM1613 310h4v4h-4zM1613 339h4v4h-4zM1613 367h4v4h-4zM1613 395h4v4h-4zM1613 423h4v4h-4zM1613 451h4v4h-4zM1613 480h4v4h-4zM1613 508h4v4h-4zM1613 536h4v4h-4zM1613 564h4v4h-4zM1613 593h4v4h-4zM1613 621h4v4h-4zM1613 649h4v4h-4zM1613 677h4v4h-4zM1613 706h4v4h-4zM1613 734h4v4h-4zM1613 762h4v4h-4zM1613 790h4v4h-4zM1613 819h4v4h-4zM1613 847h4v4h-4zM1613 875h4v4h-4zM1613 903h4v4h-4zM1613 931h4v4h-4zM1613 960h4v4h-4zM1613 988h4v4h-4zM1642 0h4v4h-4zM1642 28h4v4h-4zM1642 56h4v4h-4zM1642 84h4v4h-4zM1642 113h4v4h-4zM1642 141h4v4h-4zM1642 169h4v4h-4zM1642 197h4v4h-4zM1642 226h4v4h-4zM1642 254h4v4h-4zM1642 282h4v4h-4zM1642 310h4v4h-4zM1642 339h4v4h-4zM1642 367h4v4h-4zM1642 395h4v4h-4zM1642 423h4v4h-4zM1642 451h4v4h-4zM1642 480h4v4h-4zM1642 508h4v4h-4zM1642 536h4v4h-4zM1642 564h4v4h-4zM1642 593h4v4h-4zM1642 621h4v4h-4zM1642 649h4v4h-4zM1642 677h4v4h-4zM1642 706h4v4h-4zM1642 734h4v4h-4zM1642 762h4v4h-4zM1642 790h4v4h-4zM1642 819h4v4h-4zM1642 847h4v4h-4zM1642 875h4v4h-4zM1642 903h4v4h-4zM1642 931h4v4h-4zM1642 960h4v4h-4zM1642 988h4v4h-4zM1670 0h4v4h-4zM1670 28h4v4h-4zM1670 56h4v4h-4zM1670 84h4v4h-4zM1670 141h4v4h-4zM1670 169h4v4h-4zM1670 197h4v4h-4zM1670 226h4v4h-4zM1670 282h4v4h-4zM1670 310h4v4h-4zM1670 339h4v4h-4zM1670 367h4v4h-4zM1670 423h4v4h-4zM1670 451h4v4h-4zM1670 480h4v4h-4zM1670 508h4v4h-4zM1670 564h4v4h-4zM1670 593h4v4h-4zM1670 621h4v4h-4zM1670 649h4v4h-4zM1670 706h4v4h-4zM1670 734h4v4h-4zM1670 762h4v4h-4zM1670 790h4v4h-4zM1670 847h4v4h-4zM1670 875h4v4h-4zM1670 903h4v4h-4zM1670 931h4v4h-4zM1670 988h4v4h-4zM1698 0h4v4h-4zM1698 28h4v4h-4zM1698 56h4v4h-4zM1698 84h4v4h-4zM1698 113h4v4h-4zM1698 141h4v4h-4zM1698 169h4v4h-4zM1698 197h4v4h-4zM1698 226h4v4h-4zM1698 254h4v4h-4zM1698 282h4v4h-4zM1698 310h4v4h-4zM1698 339h4v4h-4zM1698 367h4v4h-4zM1698 395h4v4h-4zM1698 423h4v4h-4zM1698 451h4v4h-4zM1698 480h4v4h-4zM1698 508h4v4h-4zM1698 536h4v4h-4zM1698 564h4v4h-4zM1698 593h4v4h-4zM1698 621h4v4h-4zM1698 649h4v4h-4zM1698 677h4v4h-4zM1698 706h4v4h-4zM1698 734h4v4h-4zM1698 762h4v4h-4zM1698 790h4v4h-4zM1698 819h4v4h-4zM1698 847h4v4h-4zM1698 875h4v4h-4zM1698 903h4v4h-4zM1698 931h4v4h-4zM1698 960h4v4h-4zM1698 988h4v4h-4zM1726 0h4v4h-4zM1726 28h4v4h-4zM1726 56h4v4h-4zM1726 84h4v4h-4zM1726 113h4v4h-4zM1726 141h4v4h-4zM1726 169h4v4h-4zM1726 197h4v4h-4zM1726 226h4v4h-4zM1726 254h4v4h-4zM1726 282h4v4h-4zM1726 310h4v4h-4zM1726 339h4v4h-4zM1726 367h4v4h-4zM1726 395h4v4h-4zM1726 423h4v4h-4zM1726 451h4v4h-4zM1726 480h4v4h-4zM1726 508h4v4h-4zM1726 536h4v4h-4zM1726 564h4v4h-4zM1726 593h4v4h-4zM1726 621h4v4h-4zM1726 649h4v4h-4zM1726 677h4v4h-4zM1726 706h4v4h-4zM1726 734h4v4h-4zM1726 762h4v4h-4zM1726 790h4v4h-4zM1726 819h4v4h-4zM1726 847h4v4h-4zM1726 875h4v4h-4zM1726 903h4v4h-4zM1726 931h4v4h-4zM1726 960h4v4h-4zM1726 988h4v4h-4zM1755 0h4v4h-4zM1755 28h4v4h-4zM1755 56h4v4h-4zM1755 84h4v4h-4zM1755 113h4v4h-4zM1755 141h4v4h-4zM1755 169h4v4h-4zM1755 197h4v4h-4zM1755 226h4v4h-4zM1755 254h4v4h-4zM1755 282h4v4h-4zM1755 310h4v4h-4zM1755 339h4v4h-4zM1755 367h4v4h-4zM1755 395h4v4h-4zM1755 423h4v4h-4zM1755 451h4v4h-4zM1755 480h4v4h-4zM1755 508h4v4h-4zM1755 536h4v4h-4zM1755 564h4v4h-4zM1755 593h4v4h-4zM1755 621h4v4h-4zM1755 649h4v4h-4zM1755 677h4v4h-4zM1755 706h4v4h-4zM1755 734h4v4h-4zM1755 762h4v4h-4zM1755 790h4v4h-4zM1755 819h4v4h-4zM1755 847h4v4h-4zM1755 875h4v4h-4zM1755 903h4v4h-4zM1755 931h4v4h-4zM1755 960h4v4h-4zM1755 988h4v4h-4zM1783 0h4v4h-4zM1783 28h4v4h-4zM1783 56h4v4h-4zM1783 84h4v4h-4zM1783 113h4v4h-4zM1783 141h4v4h-4zM1783 169h4v4h-4zM1783 197h4v4h-4zM1783 226h4v4h-4zM1783 254h4v4h-4zM1783 282h4v4h-4zM1783 310h4v4h-4zM1783 339h4v4h-4zM1783 367h4v4h-4zM1783 395h4v4h-4zM1783 423h4v4h-4zM1783 451h4v4h-4zM1783 480h4v4h-4zM1783 508h4v4h-4zM1783 536h4v4h-4zM1783 564h4v4h-4zM1783 593h4v4h-4zM1783 621h4v4h-4zM1783 649h4v4h-4zM1783 677h4v4h-4zM1783 706h4v4h-4zM1783 734h4v4h-4zM1783 762h4v4h-4zM1783 790h4v4h-4zM1783 819h4v4h-4zM1783 847h4v4h-4zM1783 875h4v4h-4zM1783 903h4v4h-4zM1783 931h4v4h-4zM1783 960h4v4h-4zM1783 988h4v4h-4zM1811 0h4v4h-4zM1811 28h4v4h-4zM1811 56h4v4h-4zM1811 84h4v4h-4zM1811 141h4v4h-4zM1811 169h4v4h-4zM1811 197h4v4h-4zM1811 226h4v4h-4zM1811 282h4v4h-4zM1811 310h4v4h-4zM1811 339h4v4h-4zM1811 367h4v4h-4zM1811 423h4v4h-4zM1811 451h4v4h-4zM1811 480h4v4h-4zM1811 508h4v4h-4zM1811 564h4v4h-4zM1811 593h4v4h-4zM1811 621h4v4h-4zM1811 649h4v4h-4zM1811 706h4v4h-4zM1811 734h4v4h-4zM1811 762h4v4h-4zM1811 790h4v4h-4zM1811 847h4v4h-4zM1811 875h4v4h-4zM1811 903h4v4h-4zM1811 931h4v4h-4zM1811 988h4v4h-4zM1839 0h4v4h-4zM1839 28h4v4h-4zM1839 56h4v4h-4zM1839 84h4v4h-4zM1839 113h4v4h-4zM1839 141h4v4h-4zM1839 169h4v4h-4zM1839 197h4v4h-4zM1839 226h4v4h-4zM1839 254h4v4h-4zM1839 282h4v4h-4zM1839 310h4v4h-4zM1839 339h4v4h-4zM1839 367h4v4h-4zM1839 395h4v4h-4zM1839 423h4v4h-4zM1839 451h4v4h-4zM1839 480h4v4h-4zM1839 508h4v4h-4zM1839 536h4v4h-4zM1839 564h4v4h-4zM1839 593h4v4h-4zM1839 621h4v4h-4zM1839 649h4v4h-4zM1839 677h4v4h-4zM1839 706h4v4h-4zM1839 734h4v4h-4zM1839 762h4v4h-4zM1839 790h4v4h-4zM1839 819h4v4h-4zM1839 847h4v4h-4zM1839 875h4v4h-4zM1839 903h4v4h-4zM1839 931h4v4h-4zM1839 960h4v4h-4zM1839 988h4v4h-4zM1868 0h4v4h-4zM1868 28h4v4h-4zM1868 56h4v4h-4zM1868 84h4v4h-4zM1868 113h4v4h-4zM1868 141h4v4h-4zM1868 169h4v4h-4zM1868 197h4v4h-4zM1868 226h4v4h-4zM1868 254h4v4h-4zM1868 282h4v4h-4zM1868 310h4v4h-4zM1868 339h4v4h-4zM1868 367h4v4h-4zM1868 395h4v4h-4zM1868 423h4v4h-4zM1868 451h4v4h-4zM1868 480h4v4h-4zM1868 508h4v4h-4zM1868 536h4v4h-4zM1868 564h4v4h-4zM1868 593h4v4h-4zM1868 621h4v4h-4zM1868 649h4v4h-4zM1868 677h4v4h-4zM1868 706h4v4h-4zM1868 734h4v4h-4zM1868 762h4v4h-4zM1868 790h4v4h-4zM1868 819h4v4h-4zM1868 847h4v4h-4zM1868 875h4v4h-4zM1868 903h4v4h-4zM1868 931h4v4h-4zM1868 960h4v4h-4zM1868 988h4v4h-4zM1896 0h4v4h-4zM1896 28h4v4h-4zM1896 56h4v4h-4zM1896 84h4v4h-4zM1896 113h4v4h-4zM1896 141h4v4h-4zM1896 169h4v4h-4zM1896 197h4v4h-4zM1896 226h4v4h-4zM1896 254h4v4h-4zM1896 282h4v4h-4zM1896 310h4v4h-4zM1896 339h4v4h-4zM1896 367h4v4h-4zM1896 395h4v4h-4zM1896 423h4v4h-4zM1896 451h4v4h-4zM1896 480h4v4h-4zM1896 508h4v4h-4zM1896 536h4v4h-4zM1896 564h4v4h-4zM1896 593h4v4h-4zM1896 621h4v4h-4zM1896 649h4v4h-4zM1896 677h4v4h-4zM1896 706h4v4h-4zM1896 734h4v4h-4zM1896 762h4v4h-4zM1896 790h4v4h-4zM1896 819h4v4h-4zM1896 847h4v4h-4zM1896 875h4v4h-4zM1896 903h4v4h-4zM1896 931h4v4h-4zM1896 960h4v4h-4zM1896 988h4v4h-4zM1924 0h4v4h-4zM1924 28h4v4h-4zM1924 56h4v4h-4zM1924 84h4v4h-4zM1924 113h4v4h-4zM1924 141h4v4h-4zM1924 169h4v4h-4zM1924 197h4v4h-4zM1924 226h4v4h-4zM1924 254h4v4h-4zM1924 282h4v4h-4zM1924 310h4v4h-4zM1924 339h4v4h-4zM1924 367h4v4h-4zM1924 395h4v4h-4zM1924 423h4v4h-4zM1924 451h4v4h-4zM1924 480h4v4h-4zM1924 508h4v4h-4zM1924 536h4v4h-4zM1924 564h4v4h-4zM1924 593h4v4h-4zM1924 621h4v4h-4zM1924 649h4v4h-4zM1924 677h4v4h-4zM1924 706h4v4h-4zM1924 734h4v4h-4zM1924 762h4v4h-4zM1924 790h4v4h-4zM1924 819h4v4h-4zM1924 847h4v4h-4zM1924 875h4v4h-4zM1924 903h4v4h-4zM1924 931h4v4h-4zM1924 960h4v4h-4zM1924 988h4v4h-4zM1952 0h4v4h-4zM1952 28h4v4h-4zM1952 56h4v4h-4zM1952 84h4v4h-4zM1952 141h4v4h-4zM1952 169h4v4h-4zM1952 197h4v4h-4zM1952 226h4v4h-4zM1952 282h4v4h-4zM1952 310h4v4h-4zM1952 339h4v4h-4zM1952 367h4v4h-4zM1952 423h4v4h-4zM1952 451h4v4h-4zM1952 480h4v4h-4zM1952 508h4v4h-4zM1952 564h4v4h-4zM1952 593h4v4h-4zM1952 621h4v4h-4zM1952 649h4v4h-4zM1952 706h4v4h-4zM1952 734h4v4h-4zM1952 762h4v4h-4zM1952 790h4v4h-4zM1952 847h4v4h-4zM1952 875h4v4h-4zM1952 903h4v4h-4zM1952 931h4v4h-4zM1952 988h4v4h-4z" fill="#242424"/>
<path d="M116 112h6v6h-6zM116 253h6v6h-6zM116 394h6v6h-6zM116 535h6v6h-6zM116 676h6v6h-6zM116 818h6v6h-6zM116 959h6v6h-6zM257 112h6v6h-6zM257 253h6v6h-6zM257 394h6v6h-6zM257 535h6v6h-6zM257 676h6v6h-6zM257 818h6v6h-6zM257 959h6v6h-6zM398 112h6v6h-6zM398 253h6v6h-6zM398 394h6v6h-6zM398 535h6v6h-6zM398 676h6v6h-6zM398 818h6v6h-6zM398 959h6v6h-6zM540 112h6v6h-6zM540 253h6v6h-6zM540 394h6v6h-6zM540 535h6v6h-6zM540 676h6v6h-6zM540 818h6v6h-6zM540 959h6v6h-6zM681 112h6v6h-6zM681 253h6v6h-6zM681 394h6v6h-6zM681 535h6v6h-6zM681 676h6v6h-6zM681 818h6v6h-6zM681 959h6v6h-6zM822 112h6v6h-6zM822 253h6v6h-6zM822 394h6v6h-6zM822 535h6v6h-6zM822 676h6v6h-6zM822 818h6v6h-6zM822 959h6v6h-6zM963 112h6v6h-6zM963 253h6v6h-6zM963 394h6v6h-6zM963 535h6v6h-6zM963 676h6v6h-6zM963 818h6v6h-6zM963 959h6v6h-6zM1104 112h6v6h-6zM1104 253h6v6h-6zM1104 394h6v6h-6zM1104 535h6v6h-6zM1104 676h6v6h-6zM1104 818h6v6h-6zM1104 959h6v6h-6zM1245 112h6v6h-6zM1245 253h6v6h-6zM1245 394h6v6h-6zM1245 535h6v6h-6zM1245 676h6v6h-6zM1245 818h6v6h-6zM1245 959h6v6h-6zM1387 112h6v6h-6zM1387 253h6v6h-6zM1387 394h6v6h-6zM1387 535h6v6h-6zM1387 676h6v6h-6zM1387 818h6v6h-6zM1387 959h6v6h-6zM1528 112h6v6h-6zM1528 253h6v6h-6zM1528 394h6v6h-6zM1528 535h6v6h-6zM1528 676h6v6h-6zM1528 818h6v6h-6zM1528 959h6v6h-6zM1669 112h6v6h-6zM1669 253h6v6h-6zM1669 394h6v6h-6zM1669 535h6v6h-6zM1669 676h6v6h-6zM1669 818h6v6h-6zM1669 959h6v6h-6zM1810 112h6v6h-6zM1810 253h6v6h-6zM1810 394h6v6h-6zM1810 535h6v6h-6zM1810 676h6v6h-6zM1810 818h6v6h-6zM1810 959h6v6h-6zM1951 112h6v6h-6zM1951 253h6v6h-6zM1951 394h6v6h-6zM1951 535h6v6h-6zM1951 676h6v6h-6zM1951 818h6v6h-6zM1951 959h6v6h-6z" fill="#2a2a2a"/>
<path d="M237,71 C261.8,71 274.2,243.1 299,243.1" stroke="#000" stroke-opacity="0.3" stroke-width="5.2" fill="none"/>
<path d="M237,71 C261.8,71 274.2,243.1 299,243.1" stroke="#00d6a3" stroke-width="3.8" fill="none"/>
<path d="M232,284 C258.8,284 272.2,274.2 299,274.2" stroke="#6363c7" stroke-opacity="0.28" stroke-width="2.5" fill="none"/>
<path d="M232.00,284.00 L233.12,283.99 L234.23,283.98 L235.33,283.95 L236.40,283.91 L237.47,283.86 L238.52,283.80M240.47,283.66 L241.49,283.58 L242.49,283.48 L243.48,283.38 L244.46,283.27 L245.43,283.15 L246.39,283.02M248.18,282.76 L249.11,282.62 L250.03,282.46 L250.95,282.31 L251.85,282.14 L252.75,281.97 L253.65,281.80M255.33,281.46 L256.20,281.27 L257.08,281.08 L257.94,280.89 L258.81,280.70 L259.67,280.50 L260.53,280.30M262.15,279.91 L263.00,279.71 L263.85,279.50 L264.70,279.30 L265.54,279.09 L266.39,278.88 L267.24,278.68M268.85,278.29 L269.71,278.08 L270.56,277.88 L271.42,277.68 L272.28,277.48 L273.15,277.29 L274.02,277.10M275.67,276.74 L276.56,276.56 L277.45,276.38 L278.34,276.21 L279.24,276.04 L280.15,275.88 L281.07,275.72M282.82,275.44 L283.76,275.30 L284.71,275.16 L285.67,275.04 L286.64,274.92 L287.62,274.81 L288.62,274.71M290.53,274.54 L291.55,274.46 L292.59,274.39 L293.64,274.33 L294.71,274.29 L295.79,274.25 L296.88,274.22" stroke="#6363c7" stroke-width="2.6" fill="none"/>
<path d="M484,98 C542.6,98 571.9,124 630.5,124" stroke="#000" stroke-opacity="0.3" stroke-width="5.2" fill="none"/>
<path d="M484,98 C542.6,98 571.9,124 630.5,124" stroke="#00d6a3" stroke-width="3.8" fill="none"/>
<path d="M484,129 C525.6,129 546.4,883.5 588,883.5" stroke="#6363c7" stroke-opacity="0.28" stroke-width="2.5" fill="none"/>
<path d="M484.00,129.00 L484.15,129.00 L484.30,129.01 L484.45,129.03 L484.60,129.05 L484.75,129.08 L484.90,129.12M485.18,129.20 L485.33,129.26 L485.48,129.32 L485.63,129.39 L485.78,129.46 L485.93,129.54 L486.07,129.63M486.35,129.81 L486.50,129.92 L486.65,130.03 L486.80,130.15 L486.94,130.27 L487.09,130.40 L487.24,130.54M487.52,130.81 L487.66,130.97 L487.81,131.13 L487.95,131.30 L488.10,131.47 L488.25,131.65 L488.39,131.83M488.67,132.20 L488.81,132.40 L488.96,132.61 L489.10,132.83 L489.24,133.05 L489.39,133.28 L489.53,133.51M489.81,133.97 L489.95,134.22 L490.09,134.48 L490.24,134.74 L490.38,135.01 L490.52,135.28 L490.67,135.56M490.94,136.11 L491.08,136.41 L491.22,136.71 L491.36,137.02 L491.50,137.33 L491.65,137.65 L491.79,137.98M492.05,138.61 L492.20,138.96 L492.34,139.30 L492.48,139.66 L492.62,140.02 L492.76,140.38 L492.90,140.75M493.16,141.47 L493.30,141.86 L493.44,142.25 L493.58,142.65 L493.72,143.05 L493.86,143.46 L494.00,143.88M494.26,144.68 L494.40,145.11 L494.54,145.55 L494.68,145.99 L494.82,146.43 L494.96,146.89 L495.09,147.35M495.36,148.23 L495.49,148.70 L495.63,149.18 L495.77,149.66 L495.90,150.15 L496.04,150.65 L496.18,151.15M496.44,152.11 L496.57,152.62 L496.71,153.14 L496.85,153.67 L496.98,154.20 L497.12,154.73 L497.25,155.27M497.51,156.31 L497.65,156.87 L497.78,157.43 L497.92,157.99 L498.05,158.56 L498.18,159.14 L498.32,159.72M498.57,160.83 L498.71,161.43 L498.84,162.03 L498.98,162.63 L499.11,163.24 L499.24,163.86 L499.38,164.48M499.63,165.66 L499.76,166.30 L499.90,166.93 L500.03,167.58 L500.16,168.23 L500.29,168.88 L500.43,169.54M500.68,170.79 L500.81,171.47 L500.94,172.14 L501.07,172.82 L501.20,173.51 L501.34,174.20 L501.47,174.89M501.72,176.22 L501.85,176.93 L501.98,177.64 L502.11,178.36 L502.24,179.08 L502.37,179.80 L502.50,180.53M502.75,181.93 L502.88,182.67 L503.01,183.42 L503.14,184.17 L503.27,184.93 L503.40,185.69 L503.53,186.46M503.77,187.92 L503.90,188.69 L504.03,189.48 L504.16,190.26 L504.29,191.05 L504.41,191.85 L504.54,192.65M504.79,194.17 L504.91,194.99 L505.04,195.80 L505.17,196.62 L505.30,197.45 L505.43,198.27 L505.55,199.11M505.79,200.69 L505.92,201.54 L506.05,202.39 L506.18,203.24 L506.30,204.09 L506.43,204.96 L506.56,205.82M506.80,207.47 L506.92,208.34 L507.05,209.22 L507.18,210.11 L507.30,210.99 L507.43,211.89 L507.55,212.78M507.79,214.49 L507.92,215.39 L508.04,216.30 L508.17,217.22 L508.29,218.14 L508.42,219.06 L508.54,219.98M508.78,221.75 L508.91,222.68 L509.03,223.62 L509.15,224.57 L509.28,225.51 L509.40,226.46 L509.53,227.42M509.76,229.24 L509.89,230.20 L510.01,231.17 L510.13,232.14 L510.26,233.12 L510.38,234.10 L510.50,235.08M510.74,236.95 L510.86,237.94 L510.98,238.94 L511.11,239.94 L511.23,240.94 L511.35,241.94 L511.48,242.95M511.71,244.88 L511.83,245.90 L511.95,246.92 L512.08,247.94 L512.20,248.97 L512.32,250.00 L512.44,251.04M512.67,253.01 L512.79,254.06 L512.92,255.10 L513.04,256.15 L513.16,257.21 L513.28,258.27 L513.40,259.33M513.63,261.34 L513.75,262.41 L513.87,263.49 L513.99,264.56 L514.12,265.64 L514.24,266.72 L514.36,267.81M514.59,269.87 L514.71,270.96 L514.83,272.06 L514.95,273.16 L515.07,274.26 L515.19,275.37 L515.31,276.47M515.53,278.58 L515.65,279.70 L515.77,280.81 L515.89,281.94 L516.01,283.06 L516.13,284.19 L516.25,285.32M516.48,287.47 L516.60,288.60 L516.72,289.74 L516.83,290.89 L516.95,292.03 L517.07,293.18 L517.19,294.33M517.42,296.52 L517.53,297.68 L517.65,298.84 L517.77,300.00 L517.89,301.17 L518.01,302.34 L518.13,303.51M518.35,305.73 L518.47,306.91 L518.59,308.09 L518.70,309.28 L518.82,310.46 L518.94,311.65 L519.06,312.84M519.28,315.10 L519.40,316.30 L519.52,317.50 L519.63,318.70 L519.75,319.90 L519.87,321.11 L519.99,322.32M520.21,324.61 L520.32,325.83 L520.44,327.04 L520.56,328.26 L520.68,329.48 L520.79,330.71 L520.91,331.93M521.13,334.26 L521.25,335.49 L521.36,336.72 L521.48,337.96 L521.60,339.20 L521.71,340.44 L521.83,341.68M522.05,344.04 L522.17,345.28 L522.28,346.53 L522.40,347.78 L522.51,349.04 L522.63,350.29 L522.75,351.55M522.96,353.93 L523.08,355.20 L523.20,356.46 L523.31,357.73 L523.43,358.99 L523.54,360.26 L523.66,361.53M523.88,363.95 L523.99,365.22 L524.11,366.50 L524.22,367.78 L524.34,369.06 L524.45,370.34 L524.57,371.63M524.79,374.06 L524.90,375.35 L525.02,376.64 L525.13,377.93 L525.25,379.23 L525.36,380.52 L525.48,381.82M525.69,384.28 L525.81,385.58 L525.92,386.88 L526.04,388.18 L526.15,389.49 L526.27,390.80 L526.38,392.10M526.60,394.58 L526.71,395.90 L526.83,397.21 L526.94,398.52 L527.06,399.84 L527.17,401.15 L527.28,402.47M527.50,404.97 L527.61,406.29 L527.73,407.61 L527.84,408.94 L527.96,410.26 L528.07,411.59 L528.18,412.92M528.40,415.43 L528.51,416.76 L528.63,418.09 L528.74,419.43 L528.86,420.76 L528.97,422.09 L529.08,423.43M529.30,425.96 L529.41,427.30 L529.53,428.64 L529.64,429.98 L529.75,431.32 L529.87,432.66 L529.98,434.00M530.20,436.55 L530.31,437.89 L530.42,439.24 L530.54,440.58 L530.65,441.93 L530.76,443.28 L530.88,444.63M531.09,447.18 L531.20,448.54 L531.32,449.89 L531.43,451.24 L531.54,452.59 L531.66,453.94 L531.77,455.30M531.99,457.87 L532.10,459.22 L532.21,460.58 L532.32,461.93 L532.44,463.29 L532.55,464.65 L532.66,466.01M532.88,468.58 L532.99,469.94 L533.10,471.30 L533.22,472.66 L533.33,474.02 L533.44,475.38 L533.56,476.74M533.77,479.32 L533.88,480.69 L534.00,482.05 L534.11,483.41 L534.22,484.78 L534.34,486.14 L534.45,487.50M534.66,490.09 L534.78,491.45 L534.89,492.82 L535.00,494.18 L535.11,495.54 L535.23,496.91 L535.34,498.27M535.55,500.86 L535.67,502.23 L535.78,503.59 L535.89,504.96 L536.01,506.32 L536.12,507.69 L536.23,509.05M536.45,511.64 L536.56,513.00 L536.67,514.37 L536.78,515.73 L536.90,517.10 L537.01,518.46 L537.12,519.83M537.34,522.41 L537.45,523.78 L537.56,525.14 L537.68,526.51 L537.79,527.87 L537.90,529.23 L538.02,530.59M538.23,533.18 L538.34,534.54 L538.46,535.90 L538.57,537.26 L538.68,538.62 L538.79,539.98 L538.91,541.34M539.12,543.92 L539.23,545.28 L539.35,546.64 L539.46,547.99 L539.57,549.35 L539.69,550.71 L539.80,552.07M540.01,554.63 L540.13,555.99 L540.24,557.34 L540.35,558.70 L540.47,560.05 L540.58,561.40 L540.69,562.76M540.91,565.32 L541.02,566.67 L541.14,568.01 L541.25,569.36 L541.36,570.71 L541.48,572.06 L541.59,573.40M541.80,575.95 L541.92,577.30 L542.03,578.64 L542.14,579.98 L542.26,581.32 L542.37,582.66 L542.49,584.00M542.70,586.54 L542.81,587.88 L542.93,589.21 L543.04,590.55 L543.16,591.88 L543.27,593.21 L543.38,594.55M543.60,597.07 L543.71,598.40 L543.83,599.72 L543.94,601.05 L544.06,602.38 L544.17,603.70 L544.28,605.02M544.50,607.53 L544.61,608.85 L544.73,610.17 L544.84,611.49 L544.96,612.80 L545.07,614.12 L545.18,615.43M545.40,617.92 L545.52,619.23 L545.63,620.53 L545.75,621.84 L545.86,623.15 L545.97,624.45 L546.09,625.76M546.31,628.22 L546.42,629.52 L546.54,630.82 L546.65,632.11 L546.77,633.41 L546.88,634.70 L547.00,635.99M547.21,638.44 L547.33,639.72 L547.44,641.01 L547.56,642.29 L547.67,643.58 L547.79,644.86 L547.90,646.13M548.12,648.55 L548.24,649.83 L548.35,651.10 L548.47,652.37 L548.58,653.64 L548.70,654.91 L548.82,656.17M549.04,658.57 L549.15,659.83 L549.27,661.08 L549.38,662.34 L549.50,663.60 L549.61,664.85 L549.73,666.10M549.95,668.46 L550.07,669.71 L550.18,670.95 L550.30,672.19 L550.42,673.43 L550.53,674.67 L550.65,675.91M550.87,678.24 L550.99,679.47 L551.10,680.70 L551.22,681.92 L551.34,683.15 L551.45,684.37 L551.57,685.59M551.79,687.89 L551.91,689.10 L552.03,690.31 L552.14,691.52 L552.26,692.73 L552.38,693.93 L552.50,695.13M552.72,697.40 L552.84,698.59 L552.95,699.79 L553.07,700.98 L553.19,702.16 L553.31,703.35 L553.43,704.53M553.65,706.77 L553.77,707.94 L553.89,709.12 L554.00,710.29 L554.12,711.45 L554.24,712.62 L554.36,713.78M554.58,715.98 L554.70,717.14 L554.82,718.29 L554.94,719.44 L555.06,720.59 L555.18,721.73 L555.30,722.88M555.52,725.03 L555.64,726.17 L555.76,727.30 L555.88,728.43 L556.00,729.56 L556.12,730.68 L556.24,731.80M556.47,733.92 L556.59,735.03 L556.71,736.14 L556.83,737.25 L556.95,738.36 L557.07,739.46 L557.19,740.56M557.41,742.63 L557.54,743.72 L557.66,744.81 L557.78,745.89 L557.90,746.97 L558.02,748.05 L558.14,749.13M558.37,751.16 L558.49,752.22 L558.61,753.28 L558.73,754.35 L558.85,755.40 L558.98,756.46 L559.10,757.51M559.33,759.49 L559.45,760.53 L559.57,761.57 L559.69,762.60 L559.82,763.64 L559.94,764.66 L560.06,765.69M560.29,767.62 L560.41,768.64 L560.54,769.65 L560.66,770.66 L560.78,771.67 L560.91,772.67 L561.03,773.67M561.26,775.55 L561.38,776.54 L561.51,777.53 L561.63,778.51 L561.76,779.49 L561.88,780.46 L562.00,781.43M562.24,783.26 L562.36,784.22 L562.49,785.18 L562.61,786.14 L562.73,787.09 L562.86,788.03 L562.98,788.98M563.22,790.75 L563.34,791.69 L563.47,792.61 L563.59,793.54 L563.72,794.46 L563.84,795.38 L563.97,796.29M564.21,798.01 L564.33,798.91 L564.46,799.81 L564.59,800.71 L564.71,801.60 L564.84,802.49 L564.96,803.37M565.20,805.03 L565.33,805.90 L565.46,806.77 L565.58,807.64 L565.71,808.50 L565.84,809.35 L565.96,810.20M566.21,811.81 L566.33,812.65 L566.46,813.48 L566.59,814.31 L566.72,815.14 L566.84,815.96 L566.97,816.78M567.21,818.33 L567.34,819.13 L567.47,819.94 L567.60,820.73 L567.73,821.53 L567.86,822.32 L567.99,823.11M568.23,824.58 L568.36,825.36 L568.49,826.13 L568.62,826.89 L568.75,827.65 L568.88,828.41 L569.01,829.16M569.25,830.57 L569.38,831.31 L569.51,832.04 L569.64,832.77 L569.77,833.50 L569.91,834.22 L570.04,834.94M570.28,836.28 L570.42,836.98 L570.55,837.68 L570.68,838.38 L570.81,839.07 L570.94,839.75 L571.07,840.43M571.32,841.71 L571.46,842.37 L571.59,843.03 L571.72,843.69 L571.85,844.34 L571.99,844.99 L572.12,845.63M572.37,846.84 L572.50,847.47 L572.64,848.09 L572.77,848.71 L572.90,849.32 L573.04,849.93 L573.17,850.54M573.43,851.67 L573.56,852.26 L573.69,852.84 L573.83,853.42 L573.96,854.00 L574.10,854.57 L574.23,855.13M574.49,856.19 L574.63,856.74 L574.76,857.28 L574.90,857.82 L575.03,858.36 L575.17,858.89 L575.30,859.41M575.56,860.39 L575.70,860.90 L575.84,861.41 L575.97,861.91 L576.11,862.40 L576.25,862.89 L576.38,863.37M576.64,864.27 L576.78,864.74 L576.92,865.20 L577.06,865.66 L577.20,866.11 L577.33,866.56 L577.47,867.00M577.74,867.82 L577.87,868.25 L578.01,868.67 L578.15,869.08 L578.29,869.49 L578.43,869.89 L578.57,870.29M578.84,871.03 L578.98,871.41 L579.12,871.79 L579.26,872.16 L579.40,872.52 L579.54,872.88 L579.68,873.23M579.95,873.89 L580.09,874.22 L580.23,874.56 L580.37,874.88 L580.51,875.20 L580.65,875.51 L580.79,875.82M581.06,876.39 L581.21,876.68 L581.35,876.97 L581.49,877.25 L581.64,877.52 L581.78,877.79 L581.92,878.05M582.19,878.53 L582.34,878.77 L582.48,879.01 L582.63,879.25 L582.77,879.47 L582.91,879.69 L583.06,879.91M583.33,880.30 L583.48,880.50 L583.62,880.69 L583.77,880.87 L583.92,881.05 L584.06,881.22 L584.21,881.39M584.48,881.69 L584.63,881.84 L584.78,881.98 L584.92,882.11 L585.07,882.24 L585.22,882.37 L585.37,882.48M585.65,882.69 L585.79,882.79 L585.94,882.88 L586.09,882.97 L586.24,883.05 L586.39,883.12 L586.53,883.19M586.82,883.30 L586.97,883.34 L587.12,883.39 L587.27,883.42 L587.42,883.45 L587.56,883.47 L587.72,883.49" stroke="#6363c7" stroke-width="2.6" fill="none"/>
<path d="M588,883.5 C749.2,883.5 829.8,888 991,888" stroke="#6363c7" stroke-opacity="0.28" stroke-width="2.5" fill="none"/>
<path d="M588.00,883.50 L589.11,883.50 L590.22,883.50 L591.33,883.50 L592.43,883.50 L593.54,883.50 L594.64,883.50M596.71,883.50 L597.81,883.51 L598.90,883.51 L599.98,883.51 L601.07,883.51 L602.15,883.51 L603.23,883.51M605.27,883.52 L606.35,883.52 L607.42,883.52 L608.49,883.52 L609.55,883.53 L610.62,883.53 L611.68,883.53M613.68,883.54 L614.74,883.54 L615.79,883.55 L616.84,883.55 L617.89,883.55 L618.94,883.56 L619.98,883.56M621.95,883.57 L622.99,883.57 L624.03,883.58 L625.06,883.58 L626.09,883.59 L627.12,883.59 L628.15,883.60M630.09,883.60 L631.11,883.61 L632.13,883.62 L633.14,883.62 L634.16,883.63 L635.17,883.63 L636.18,883.64M638.09,883.65 L639.09,883.66 L640.10,883.66 L641.10,883.67 L642.09,883.67 L643.09,883.68 L644.09,883.69M645.96,883.70 L646.95,883.71 L647.94,883.71 L648.93,883.72 L649.91,883.73 L650.89,883.74 L651.87,883.74M653.72,883.76 L654.70,883.77 L655.67,883.77 L656.64,883.78 L657.61,883.79 L658.58,883.80 L659.54,883.81M661.37,883.82 L662.33,883.83 L663.29,883.84 L664.24,883.85 L665.20,883.86 L666.15,883.87 L667.10,883.87M668.90,883.89 L669.85,883.90 L670.80,883.91 L671.74,883.92 L672.68,883.93 L673.62,883.94 L674.56,883.95M676.34,883.97 L677.27,883.98 L678.21,883.99 L679.14,884.00 L680.07,884.01 L681.00,884.02 L681.92,884.03M683.68,884.05 L684.60,884.06 L685.52,884.07 L686.44,884.08 L687.36,884.09 L688.28,884.10 L689.19,884.11M690.93,884.14 L691.84,884.15 L692.75,884.16 L693.66,884.17 L694.57,884.18 L695.47,884.19 L696.38,884.20M698.09,884.23 L698.99,884.24 L699.89,884.25 L700.79,884.26 L701.69,884.27 L702.59,884.29 L703.48,884.30M705.18,884.32 L706.07,884.33 L706.96,884.35 L707.85,884.36 L708.74,884.37 L709.63,884.38 L710.51,884.40M712.19,884.42 L713.07,884.43 L713.96,884.45 L714.84,884.46 L715.72,884.47 L716.60,884.49 L717.47,884.50M719.14,884.52 L720.01,884.54 L720.89,884.55 L721.76,884.56 L722.63,884.58 L723.50,884.59 L724.37,884.60M726.02,884.63 L726.89,884.64 L727.76,884.66 L728.62,884.67 L729.49,884.69 L730.35,884.70 L731.22,884.71M732.85,884.74 L733.71,884.75 L734.57,884.77 L735.43,884.78 L736.29,884.80 L737.15,884.81 L738.01,884.83M739.63,884.85 L740.49,884.87 L741.34,884.88 L742.20,884.90 L743.05,884.91 L743.90,884.92 L744.76,884.94M746.37,884.97 L747.22,884.98 L748.07,885.00 L748.92,885.01 L749.77,885.03 L750.62,885.04 L751.46,885.06M753.07,885.08 L753.91,885.10 L754.76,885.11 L755.61,885.13 L756.45,885.14 L757.29,885.16 L758.14,885.17M759.74,885.20 L760.58,885.22 L761.42,885.23 L762.26,885.25 L763.10,885.26 L763.95,885.28 L764.79,885.29M766.38,885.32 L767.22,885.34 L768.06,885.35 L768.90,885.37 L769.73,885.38 L770.57,885.40 L771.41,885.41M773.00,885.44 L773.84,885.46 L774.67,885.47 L775.51,885.49 L776.35,885.51 L777.18,885.52 L778.02,885.54M779.60,885.57 L780.44,885.58 L781.28,885.60 L782.11,885.61 L782.95,885.63 L783.78,885.64 L784.62,885.66M786.20,885.69 L787.04,885.70 L787.87,885.72 L788.71,885.74 L789.54,885.75 L790.38,885.77 L791.21,885.78M792.80,885.81 L793.63,885.83 L794.47,885.84 L795.30,885.86 L796.14,885.87 L796.98,885.89 L797.81,885.90M799.40,885.93 L800.23,885.95 L801.07,885.96 L801.90,885.98 L802.74,886.00 L803.58,886.01 L804.41,886.03M806.00,886.06 L806.84,886.07 L807.68,886.09 L808.52,886.10 L809.35,886.12 L810.19,886.13 L811.03,886.15M812.62,886.18 L813.46,886.19 L814.30,886.21 L815.14,886.22 L815.98,886.24 L816.83,886.25 L817.67,886.27M819.26,886.30 L820.11,886.31 L820.95,886.33 L821.79,886.34 L822.64,886.36 L823.48,886.37 L824.33,886.39M825.93,886.42 L826.78,886.43 L827.63,886.45 L828.47,886.46 L829.32,886.48 L830.17,886.49 L831.02,886.51M832.63,886.53 L833.48,886.55 L834.33,886.56 L835.19,886.58 L836.04,886.59 L836.89,886.61 L837.75,886.62M839.37,886.65 L840.22,886.66 L841.08,886.68 L841.94,886.69 L842.80,886.70 L843.66,886.72 L844.52,886.73M846.15,886.76 L847.01,886.77 L847.87,886.79 L848.74,886.80 L849.60,886.82 L850.47,886.83 L851.33,886.84M852.98,886.87 L853.85,886.88 L854.72,886.90 L855.59,886.91 L856.46,886.92 L857.33,886.94 L858.21,886.95M859.86,886.98 L860.74,886.99 L861.62,887.00 L862.50,887.02 L863.38,887.03 L864.26,887.04 L865.14,887.05M866.81,887.08 L867.70,887.09 L868.58,887.10 L869.47,887.12 L870.36,887.13 L871.24,887.14 L872.13,887.15M873.82,887.18 L874.72,887.19 L875.61,887.20 L876.51,887.22 L877.40,887.23 L878.30,887.24 L879.20,887.25M880.91,887.27 L881.81,887.29 L882.72,887.30 L883.62,887.31 L884.53,887.32 L885.44,887.33 L886.35,887.34M888.07,887.36 L888.99,887.38 L889.90,887.39 L890.82,887.40 L891.74,887.41 L892.66,887.42 L893.58,887.43M895.32,887.45 L896.25,887.46 L897.17,887.47 L898.10,887.48 L899.03,887.49 L899.96,887.50 L900.89,887.51M902.66,887.53 L903.60,887.54 L904.54,887.55 L905.48,887.56 L906.42,887.57 L907.36,887.58 L908.30,887.59M910.10,887.61 L911.05,887.62 L912.00,887.63 L912.95,887.64 L913.90,887.64 L914.86,887.65 L915.82,887.66M917.63,887.68 L918.60,887.69 L919.56,887.69 L920.53,887.70 L921.49,887.71 L922.46,887.72 L923.43,887.73M925.28,887.74 L926.25,887.75 L927.23,887.76 L928.21,887.76 L929.19,887.77 L930.18,887.78 L931.16,887.79M933.04,887.80 L934.03,887.81 L935.02,887.81 L936.01,887.82 L937.01,887.83 L938.01,887.83 L939.01,887.84M940.91,887.85 L941.92,887.86 L942.93,887.86 L943.94,887.87 L944.95,887.87 L945.96,887.88 L946.98,887.89M948.91,887.90 L949.94,887.90 L950.96,887.91 L951.99,887.91 L953.02,887.91 L954.05,887.92 L955.08,887.92M957.05,887.93 L958.09,887.94 L959.13,887.94 L960.17,887.94 L961.22,887.95 L962.27,887.95 L963.32,887.95M965.32,887.96 L966.37,887.96 L967.43,887.97 L968.49,887.97 L969.56,887.97 L970.63,887.98 L971.69,887.98M973.73,887.98 L974.80,887.98 L975.88,887.99 L976.96,887.99 L978.04,887.99 L979.13,887.99 L980.22,887.99M982.29,888.00 L983.38,888.00 L984.48,888.00 L985.58,888.00 L986.68,888.00 L987.79,888.00 L988.89,888.00" stroke="#6363c7" stroke-width="2.6" fill="none"/>
<path d="M991,888 C1034.8,888 1056.7,810 1100.5,810" stroke="#6363c7" stroke-opacity="0.28" stroke-width="2.5" fill="none"/>
<path d="M991.00,888.00 L991.87,887.99 L992.74,887.96 L993.60,887.91 L994.46,887.84 L995.31,887.75 L996.15,887.64M997.74,887.37 L998.57,887.21 L999.39,887.03 L1000.21,886.83 L1001.03,886.61 L1001.84,886.37 L1002.64,886.12M1004.15,885.59 L1004.95,885.29 L1005.73,884.97 L1006.51,884.63 L1007.29,884.29 L1008.07,883.92 L1008.84,883.54M1010.28,882.78 L1011.04,882.36 L1011.79,881.92 L1012.54,881.47 L1013.29,881.01 L1014.03,880.53 L1014.77,880.05M1016.16,879.08 L1016.89,878.56 L1017.61,878.02 L1018.34,877.48 L1019.06,876.92 L1019.77,876.35 L1020.48,875.77M1021.83,874.64 L1022.53,874.03 L1023.23,873.41 L1023.93,872.78 L1024.63,872.14 L1025.33,871.50 L1026.02,870.84M1027.32,869.58 L1028.01,868.90 L1028.69,868.21 L1029.37,867.52 L1030.05,866.82 L1030.73,866.12 L1031.41,865.40M1032.68,864.04 L1033.35,863.31 L1034.02,862.58 L1034.69,861.84 L1035.36,861.09 L1036.03,860.35 L1036.69,859.59M1037.95,858.16 L1038.61,857.40 L1039.27,856.63 L1039.93,855.86 L1040.59,855.09 L1041.25,854.32 L1041.91,853.55M1043.16,852.08 L1043.81,851.30 L1044.47,850.52 L1045.13,849.74 L1045.78,848.96 L1046.44,848.18 L1047.10,847.40M1048.34,845.92 L1049.00,845.15 L1049.66,844.37 L1050.32,843.60 L1050.98,842.82 L1051.64,842.05 L1052.30,841.29M1053.55,839.84 L1054.21,839.08 L1054.88,838.33 L1055.54,837.57 L1056.21,836.83 L1056.88,836.08 L1057.55,835.35M1058.82,833.96 L1059.49,833.24 L1060.16,832.52 L1060.84,831.81 L1061.52,831.10 L1062.20,830.40 L1062.88,829.71M1064.18,828.42 L1064.87,827.75 L1065.56,827.09 L1066.25,826.44 L1066.94,825.79 L1067.64,825.15 L1068.34,824.53M1069.67,823.36 L1070.38,822.76 L1071.09,822.17 L1071.80,821.59 L1072.52,821.02 L1073.24,820.47 L1073.96,819.92M1075.34,818.92 L1076.07,818.40 L1076.81,817.90 L1077.55,817.42 L1078.29,816.94 L1079.04,816.48 L1079.79,816.03M1081.22,815.22 L1081.98,814.81 L1082.75,814.42 L1083.52,814.04 L1084.29,813.68 L1085.07,813.33 L1085.85,813.00M1087.35,812.41 L1088.14,812.13 L1088.94,811.86 L1089.75,811.60 L1090.56,811.37 L1091.37,811.15 L1092.19,810.95M1093.76,810.63 L1094.59,810.48 L1095.44,810.35 L1096.28,810.24 L1097.13,810.16 L1097.99,810.09 L1098.85,810.04" stroke="#6363c7" stroke-width="2.6" fill="none"/>
<path d="M815,89 C835.8,89 846.2,265 867,265" stroke="#000" stroke-opacity="0.3" stroke-width="5.2" fill="none"/>
<path d="M815,89 C835.8,89 846.2,265 867,265" stroke="#00d6a3" stroke-width="3.8" fill="none"/>
<path d="M815,89 C1095.0,89 1235.0,345 1515,345" stroke="#000" stroke-opacity="0.3" stroke-width="5.2" fill="none"/>
<path d="M815,89 C1095.0,89 1235.0,345 1515,345" stroke="#00d6a3" stroke-width="3.8" fill="none"/>
<path d="M808,427 C831.6,427 843.4,327 867,327" stroke="#000" stroke-opacity="0.3" stroke-width="5.2" fill="none"/>
<path d="M808,427 C831.6,427 843.4,327 867,327" stroke="#00d6a3" stroke-width="3.8" fill="none"/>
<path d="M1051,230 C1070.8,230 1080.7,749 1100.5,749" stroke="#000" stroke-opacity="0.3" stroke-width="5.2" fill="none"/>
<path d="M1051,230 C1070.8,230 1080.7,749 1100.5,749" stroke="#00d6a3" stroke-width="3.8" fill="none"/>
<path d="M1285,714 C1377.0,714 1423.0,355 1515,355" stroke="#000" stroke-opacity="0.3" stroke-width="5.2" fill="none"/>
<path d="M1285,714 C1377.0,714 1423.0,355 1515,355" stroke="#00d6a3" stroke-width="3.8" fill="none"/>
<path d="M1701,314 C1711.8,314 1717.2,313 1728,313" stroke="#000" stroke-opacity="0.3" stroke-width="5.2" fill="none"/>
<path d="M1701,314 C1711.8,314 1717.2,313 1728,313" stroke="#00d6a3" stroke-width="3.8" fill="none"/>
<rect x="50" y="20" width="189" height="202" rx="7.5" fill="#000" opacity="0.55" filter="url(#sh)"/>
<rect x="51.5" y="20.5" width="186" height="200" rx="6.0" fill="#101010" opacity="0.8"/>
<rect x="53" y="22" width="183" height="197" rx="4.5" fill="#303030"/>
<path d="M53,50 L53,26.5 Q53,22 57.5,22 L231.5,22 Q236,22 236,26.5 L236,50 Z" fill="#1d725e"/>
<rect x="53" y="49.5" width="183" height="1" fill="#000" opacity="0.18"/>
<path d="M67.8,32.5 L73.8,39.099999999999994 L79.8,32.5" stroke="#dcdcdc" stroke-width="1.3" fill="none"/>
<text x="88.0" y="41.3" text-anchor="start" fill="#000" fill-opacity="0.55" font-size="15.5">Grid</text>
<text x="88.0" y="40.3" text-anchor="start" fill="#e6e6e6" font-size="15.5">Grid</text>
<text x="220.0" y="77.0" text-anchor="end" fill="#000" fill-opacity="0.55" font-size="15.5">Mesh</text>
<text x="220.0" y="76.0" text-anchor="end" fill="#e6e6e6" font-size="15.5">Mesh</text>
<circle cx="237" cy="71" r="6.9" fill="#0c0c0c"/>
<circle cx="237" cy="71" r="5.7" fill="#00d6a3"/>
<rect x="65.5" y="91.7" width="157" height="28" rx="5" fill="#3d3d3d"/>
<rect x="67" y="93.2" width="154" height="25" rx="4" fill="#545454"/>
<text x="88.0" y="111.7" text-anchor="start" fill="#000" fill-opacity="0.55" font-size="15.5">Size X</text>
<text x="88.0" y="110.7" text-anchor="start" fill="#e6e6e6" font-size="15.5">Size X</text>
<text x="202.0" y="111.7" text-anchor="end" fill="#000" fill-opacity="0.55" font-size="15.5">1 m</text>
<text x="202.0" y="110.7" text-anchor="end" fill="#e6e6e6" font-size="15.5">1 m</text>
<circle cx="52.5" cy="105.7" r="6.9" fill="#0c0c0c"/>
<circle cx="52.5" cy="105.7" r="5.7" fill="#a1a1a1"/>
<rect x="65.5" y="123.0" width="157" height="28" rx="5" fill="#3d3d3d"/>
<rect x="67" y="124.5" width="154" height="25" rx="4" fill="#545454"/>
<text x="88.0" y="143.0" text-anchor="start" fill="#000" fill-opacity="0.55" font-size="15.5">Size Y</text>
<text x="88.0" y="142.0" text-anchor="start" fill="#e6e6e6" font-size="15.5">Size Y</text>
<text x="202.0" y="143.0" text-anchor="end" fill="#000" fill-opacity="0.55" font-size="15.5">1 m</text>
<text x="202.0" y="142.0" text-anchor="end" fill="#e6e6e6" font-size="15.5">1 m</text>
<circle cx="52.5" cy="137" r="6.9" fill="#0c0c0c"/>
<circle cx="52.5" cy="137" r="5.7" fill="#a1a1a1"/>
<rect x="65.5" y="154.0" width="157" height="28" rx="5" fill="#3d3d3d"/>
<rect x="67" y="155.5" width="154" height="25" rx="4" fill="#545454"/>
<text x="88.0" y="174.0" text-anchor="start" fill="#000" fill-opacity="0.55" font-size="15.5">Vert<tspan dx="0.6">ices X</tspan></text>
<text x="88.0" y="173.0" text-anchor="start" fill="#e6e6e6" font-size="15.5">Vert<tspan dx="0.6">ices X</tspan></text>
<text x="202.0" y="174.0" text-anchor="end" fill="#000" fill-opacity="0.55" font-size="15.5">10</text>
<text x="202.0" y="173.0" text-anchor="end" fill="#e6e6e6" font-size="15.5">10</text>
<circle cx="52.5" cy="168" r="6.9" fill="#0c0c0c"/>
<circle cx="52.5" cy="168" r="5.7" fill="#598c5c"/>
<rect x="65.5" y="185.0" width="157" height="28" rx="5" fill="#3d3d3d"/>
<rect x="67" y="186.5" width="154" height="25" rx="4" fill="#545454"/>
<text x="88.0" y="205.0" text-anchor="start" fill="#000" fill-opacity="0.55" font-size="15.5">Vert<tspan dx="0.6">ices Y</tspan></text>
<text x="88.0" y="204.0" text-anchor="start" fill="#e6e6e6" font-size="15.5">Vert<tspan dx="0.6">ices Y</tspan></text>
<text x="202.0" y="205.0" text-anchor="end" fill="#000" fill-opacity="0.55" font-size="15.5">10</text>
<text x="202.0" y="204.0" text-anchor="end" fill="#e6e6e6" font-size="15.5">10</text>
<circle cx="52.5" cy="199" r="6.9" fill="#0c0c0c"/>
<circle cx="52.5" cy="199" r="5.7" fill="#598c5c"/>
<rect x="45" y="234" width="189" height="72.5" rx="7.5" fill="#000" opacity="0.55" filter="url(#sh)"/>
<rect x="46.5" y="234.5" width="186" height="70.5" rx="6.0" fill="#101010" opacity="0.8"/>
<rect x="48" y="236" width="183" height="67.5" rx="4.5" fill="#303030"/>
<path d="M48,264 L48,240.5 Q48,236 52.5,236 L226.5,236 Q231,236 231,240.5 L231,264 Z" fill="#83314a"/>
<rect x="48" y="263.5" width="183" height="1" fill="#000" opacity="0.18"/>
<path d="M62.8,246.5 L68.8,253.10000000000002 L74.8,246.5" stroke="#dcdcdc" stroke-width="1.3" fill="none"/>
<text x="83.0" y="255.3" text-anchor="start" fill="#000" fill-opacity="0.55" font-size="15.5">Posit<tspan dx="0.6">ion</tspan></text>
<text x="83.0" y="254.3" text-anchor="start" fill="#e6e6e6" font-size="15.5">Posit<tspan dx="0.6">ion</tspan></text>
<text x="215.0" y="290.0" text-anchor="end" fill="#000" fill-opacity="0.55" font-size="15.5">Posit<tspan dx="0.6">ion</tspan></text>
<text x="215.0" y="289.0" text-anchor="end" fill="#e6e6e6" font-size="15.5">Posit<tspan dx="0.6">ion</tspan></text>
<path d="M232,275.6 L240.4,284 L232,292.4 L223.6,284 Z" fill="#111"/>
<path d="M232,276.8 L239.2,284 L232,291.2 L224.8,284 Z" fill="#6363c7"/>
<rect x="296.5" y="48" width="190.0" height="252" rx="7.5" fill="#000" opacity="0.55" filter="url(#sh)"/>
<rect x="298.0" y="48.5" width="187.0" height="250" rx="6.0" fill="#101010" opacity="0.8"/>
<rect x="299.5" y="50" width="184.0" height="247" rx="4.5" fill="#303030"/>
<path d="M299.5,78 L299.5,54.5 Q299.5,50 304.0,50 L479.0,50 Q483.5,50 483.5,54.5 L483.5,78 Z" fill="#1d2646"/>
<rect x="299.5" y="77.5" width="184.0" height="1" fill="#000" opacity="0.18"/>
<path d="M314.3,60.5 L320.3,67.1 L326.3,60.5" stroke="#dcdcdc" stroke-width="1.3" fill="none"/>
<text x="334.5" y="69.3" text-anchor="start" fill="#000" fill-opacity="0.55" font-size="15.5" letter-spacing="0">Capt<tspan dx="0.6">ure At<tspan dx="0.6">t<tspan dx="0.6">ribut<tspan dx="0.6">e</tspan></tspan></tspan></tspan></text>
<text x="334.5" y="68.3" text-anchor="start" fill="#e6e6e6" font-size="15.5" letter-spacing="0">Capt<tspan dx="0.6">ure At<tspan dx="0.6">t<tspan dx="0.6">ribut<tspan dx="0.6">e</tspan></tspan></tspan></tspan></text>
<text x="467.5" y="104.0" text-anchor="end" fill="#000" fill-opacity="0.55" font-size="15.5">Geomet<tspan dx="0.6">ry</tspan></text>
<text x="467.5" y="103.0" text-anchor="end" fill="#e6e6e6" font-size="15.5">Geomet<tspan dx="0.6">ry</tspan></text>
<circle cx="484.5" cy="98" r="6.9" fill="#0c0c0c"/>
<circle cx="484.5" cy="98" r="5.7" fill="#00d6a3"/>
<text x="467.5" y="135.0" text-anchor="end" fill="#000" fill-opacity="0.55" font-size="15.5">At<tspan dx="0.6">t<tspan dx="0.6">ribut<tspan dx="0.6">e</tspan></tspan></tspan></text>
<text x="467.5" y="134.0" text-anchor="end" fill="#e6e6e6" font-size="15.5">At<tspan dx="0.6">t<tspan dx="0.6">ribut<tspan dx="0.6">e</tspan></tspan></tspan></text>
<path d="M484.5,120.6 L492.9,129 L484.5,137.4 L476.1,129 Z" fill="#111"/>
<path d="M484.5,121.8 L491.7,129 L484.5,136.2 L477.3,129 Z" fill="#6363c7"/>
<rect x="314.2" y="160.9" width="153.8" height="26.099999999999994" rx="5" fill="#282828" stroke="#3d3d3d" stroke-width="1.8"/>
<text x="323.7" y="179.9" text-anchor="start" fill="#000" fill-opacity="0.55" font-size="15.5">Vect<tspan dx="0.6">or</tspan></text>
<text x="323.7" y="178.9" text-anchor="start" fill="#e6e6e6" font-size="15.5">Vect<tspan dx="0.6">or</tspan></text>
<path d="M455.3,171.64999999999998 L459.5,175.95 L463.7,171.64999999999998" stroke="#e6e6e6" stroke-width="1.5" fill="none"/>
<rect x="314.2" y="195.3" width="153.8" height="25.899999999999977" rx="5" fill="#282828" stroke="#3d3d3d" stroke-width="1.8"/>
<text x="323.7" y="214.2" text-anchor="start" fill="#000" fill-opacity="0.55" font-size="15.5">Point</text>
<text x="323.7" y="213.2" text-anchor="start" fill="#e6e6e6" font-size="15.5">Point</text>
<path d="M455.3,205.95 L459.5,210.25 L463.7,205.95" stroke="#e6e6e6" stroke-width="1.5" fill="none"/>
<text x="314.0" y="249.1" text-anchor="start" fill="#000" fill-opacity="0.55" font-size="15.5">Geomet<tspan dx="0.6">ry</tspan></text>
<text x="314.0" y="248.1" text-anchor="start" fill="#e6e6e6" font-size="15.5">Geomet<tspan dx="0.6">ry</tspan></text>
<circle cx="299.0" cy="243.1" r="6.9" fill="#0c0c0c"/>
<circle cx="299.0" cy="243.1" r="5.7" fill="#00d6a3"/>
<text x="314.0" y="280.2" text-anchor="start" fill="#000" fill-opacity="0.55" font-size="15.5">Value</text>
<text x="314.0" y="279.2" text-anchor="start" fill="#e6e6e6" font-size="15.5">Value</text>
<path d="M299.0,265.8 L307.4,274.2 L299.0,282.59999999999997 L290.6,274.2 Z" fill="#111"/>
<path d="M299.0,267.0 L306.2,274.2 L299.0,281.4 L291.8,274.2 Z" fill="#6363c7"/>
<rect x="628" y="39" width="190" height="285.5" rx="7.5" fill="#000" opacity="0.55" filter="url(#sh)"/>
<rect x="629.5" y="39.5" width="187" height="283.5" rx="6.0" fill="#101010" opacity="0.8"/>
<rect x="631" y="41" width="184" height="280.5" rx="4.5" fill="#303030"/>
<path d="M631,69 L631,45.5 Q631,41 635.5,41 L810.5,41 Q815,41 815,45.5 L815,69 Z" fill="#1d725e"/>
<rect x="631" y="68.5" width="184" height="1" fill="#000" opacity="0.18"/>
<path d="M645.8,51.5 L651.8,58.099999999999994 L657.8,51.5" stroke="#dcdcdc" stroke-width="1.3" fill="none"/>
<text x="666.0" y="60.3" text-anchor="start" fill="#000" fill-opacity="0.55" font-size="15.5">Set<tspan dx="0.6"> Posit<tspan dx="0.6">ion</tspan></tspan></text>
<text x="666.0" y="59.3" text-anchor="start" fill="#e6e6e6" font-size="15.5">Set<tspan dx="0.6"> Posit<tspan dx="0.6">ion</tspan></tspan></text>
<text x="799.0" y="95.0" text-anchor="end" fill="#000" fill-opacity="0.55" font-size="15.5">Geomet<tspan dx="0.6">ry</tspan></text>
<text x="799.0" y="94.0" text-anchor="end" fill="#e6e6e6" font-size="15.5">Geomet<tspan dx="0.6">ry</tspan></text>
<circle cx="816" cy="89" r="6.9" fill="#0c0c0c"/>
<circle cx="816" cy="89" r="5.7" fill="#00d6a3"/>
<text x="645.5" y="130.0" text-anchor="start" fill="#000" fill-opacity="0.55" font-size="15.5">Geomet<tspan dx="0.6">ry</tspan></text>
<text x="645.5" y="129.0" text-anchor="start" fill="#e6e6e6" font-size="15.5">Geomet<tspan dx="0.6">ry</tspan></text>
<circle cx="630.5" cy="124" r="6.9" fill="#0c0c0c"/>
<circle cx="630.5" cy="124" r="5.7" fill="#00d6a3"/>
<text x="645.5" y="161.0" text-anchor="start" fill="#000" fill-opacity="0.55" font-size="15.5">Select<tspan dx="0.6">ion</tspan></text>
<text x="645.5" y="160.0" text-anchor="start" fill="#e6e6e6" font-size="15.5">Select<tspan dx="0.6">ion</tspan></text>
<path d="M630.5,146.6 L638.9,155 L630.5,163.4 L622.1,155 Z" fill="#111"/>
<path d="M630.5,147.8 L637.7,155 L630.5,162.2 L623.3,155 Z" fill="#cca6d6"/>
<circle cx="630.5" cy="155" r="1.7" fill="#111"/>
<text x="645.5" y="192.5" text-anchor="start" fill="#000" fill-opacity="0.55" font-size="15.5">Posit<tspan dx="0.6">ion</tspan></text>
<text x="645.5" y="191.5" text-anchor="start" fill="#e6e6e6" font-size="15.5">Posit<tspan dx="0.6">ion</tspan></text>
<path d="M630.5,178.1 L638.9,186.5 L630.5,194.9 L622.1,186.5 Z" fill="#111"/>
<path d="M630.5,179.3 L637.7,186.5 L630.5,193.7 L623.3,186.5 Z" fill="#6363c7"/>
<text x="645.5" y="224.0" text-anchor="start" fill="#000" fill-opacity="0.55" font-size="15.5">Offset<tspan dx="0.6">:</tspan></text>
<text x="645.5" y="223.0" text-anchor="start" fill="#e6e6e6" font-size="15.5">Offset<tspan dx="0.6">:</tspan></text>
<path d="M630.5,209.6 L638.9,218 L630.5,226.4 L622.1,218 Z" fill="#111"/>
<path d="M630.5,210.8 L637.7,218 L630.5,225.2 L623.3,218 Z" fill="#6363c7"/>
<circle cx="630.5" cy="218" r="1.7" fill="#111"/>
<rect x="644.0" y="232.0" width="156.0" height="84.5" rx="5" fill="#3d3d3d"/>
<rect x="645.5" y="233.5" width="153.0" height="81.5" rx="4" fill="#545454"/>
<rect x="645.5" y="259.6666666666667" width="153.0" height="2" fill="#3a3a3a"/>
<rect x="645.5" y="286.8333333333333" width="153.0" height="2" fill="#3a3a3a"/>
<text x="667.0" y="251.9" text-anchor="start" fill="#000" fill-opacity="0.55" font-size="15.5">X</text>
<text x="667.0" y="250.9" text-anchor="start" fill="#e6e6e6" font-size="15.5">X</text>
<text x="779.5" y="251.9" text-anchor="end" fill="#000" fill-opacity="0.55" font-size="15.5">1 m</text>
<text x="779.5" y="250.9" text-anchor="end" fill="#e6e6e6" font-size="15.5">1 m</text>
<text x="667.0" y="279.1" text-anchor="start" fill="#000" fill-opacity="0.55" font-size="15.5">Y</text>
<text x="667.0" y="278.1" text-anchor="start" fill="#e6e6e6" font-size="15.5">Y</text>
<text x="779.5" y="279.1" text-anchor="end" fill="#000" fill-opacity="0.55" font-size="15.5">0 m</text>
<text x="779.5" y="278.1" text-anchor="end" fill="#e6e6e6" font-size="15.5">0 m</text>
<text x="667.0" y="306.2" text-anchor="start" fill="#000" fill-opacity="0.55" font-size="15.5">Z</text>
<text x="667.0" y="305.2" text-anchor="start" fill="#e6e6e6" font-size="15.5">Z</text>
<text x="779.5" y="306.2" text-anchor="end" fill="#000" fill-opacity="0.55" font-size="15.5">0 m</text>
<text x="779.5" y="305.2" text-anchor="end" fill="#e6e6e6" font-size="15.5">0 m</text>
<rect x="864" y="179" width="190" height="465" rx="7.5" fill="#000" opacity="0.55" filter="url(#sh)"/>
<rect x="865.5" y="179.5" width="187" height="463" rx="6.0" fill="#101010" opacity="0.8"/>
<rect x="867" y="181" width="184" height="460" rx="4.5" fill="#303030"/>
<path d="M867,209 L867,185.5 Q867,181 871.5,181 L1046.5,181 Q1051,181 1051,185.5 L1051,209 Z" fill="#1d725e"/>
<rect x="867" y="208.5" width="184" height="1" fill="#000" opacity="0.18"/>
<path d="M881.8,191.5 L887.8,198.10000000000002 L893.8,191.5" stroke="#dcdcdc" stroke-width="1.3" fill="none"/>
<text x="902.0" y="200.3" text-anchor="start" fill="#000" fill-opacity="0.55" font-size="15.5">Inst<tspan dx="0.6">ance on Point<tspan dx="0.6">s</tspan></tspan></text>
<text x="902.0" y="199.3" text-anchor="start" fill="#e6e6e6" font-size="15.5">Inst<tspan dx="0.6">ance on Point<tspan dx="0.6">s</tspan></tspan></text>
<text x="1035.0" y="236.0" text-anchor="end" fill="#000" fill-opacity="0.55" font-size="15.5">Inst<tspan dx="0.6">ances</tspan></text>
<text x="1035.0" y="235.0" text-anchor="end" fill="#e6e6e6" font-size="15.5">Inst<tspan dx="0.6">ances</tspan></text>
<circle cx="1052" cy="230" r="6.9" fill="#0c0c0c"/>
<circle cx="1052" cy="230" r="5.7" fill="#00d6a3"/>
<text x="881.5" y="271.0" text-anchor="start" fill="#000" fill-opacity="0.55" font-size="15.5">Point<tspan dx="0.6">s</tspan></text>
<text x="881.5" y="270.0" text-anchor="start" fill="#e6e6e6" font-size="15.5">Point<tspan dx="0.6">s</tspan></text>
<circle cx="866.5" cy="265" r="6.9" fill="#0c0c0c"/>
<circle cx="866.5" cy="265" r="5.7" fill="#00d6a3"/>
<text x="881.5" y="302.0" text-anchor="start" fill="#000" fill-opacity="0.55" font-size="15.5">Select<tspan dx="0.6">ion</tspan></text>
<text x="881.5" y="301.0" text-anchor="start" fill="#e6e6e6" font-size="15.5">Select<tspan dx="0.6">ion</tspan></text>
<path d="M866.5,287.6 L874.9,296 L866.5,304.4 L858.1,296 Z" fill="#111"/>
<path d="M866.5,288.8 L873.7,296 L866.5,303.2 L859.3,296 Z" fill="#cca6d6"/>
<circle cx="866.5" cy="296" r="1.7" fill="#111"/>
<text x="881.5" y="333.0" text-anchor="start" fill="#000" fill-opacity="0.55" font-size="15.5">Inst<tspan dx="0.6">ance</tspan></text>
<text x="881.5" y="332.0" text-anchor="start" fill="#e6e6e6" font-size="15.5">Inst<tspan dx="0.6">ance</tspan></text>
<circle cx="866.5" cy="327" r="6.9" fill="#0c0c0c"/>
<circle cx="866.5" cy="327" r="5.7" fill="#00d6a3"/>
<path d="M866.5,349.6 L874.9,358 L866.5,366.4 L858.1,358 Z" fill="#111"/>
<path d="M866.5,350.8 L873.7,358 L866.5,365.2 L859.3,358 Z" fill="#cca6d6"/>
<circle cx="866.5" cy="358" r="1.7" fill="#111"/>
<rect x="881" y="348" width="20" height="20" rx="4.5" fill="#393939"/>
<rect x="883" y="350" width="16" height="16" rx="3" fill="#545454"/>
<text x="906.0" y="364.0" text-anchor="start" fill="#000" fill-opacity="0.55" font-size="15.5">Pick Inst<tspan dx="0.6">ance</tspan></text>
<text x="906.0" y="363.0" text-anchor="start" fill="#e6e6e6" font-size="15.5">Pick Inst<tspan dx="0.6">ance</tspan></text>
<text x="881.5" y="395.0" text-anchor="start" fill="#000" fill-opacity="0.55" font-size="15.5">Inst<tspan dx="0.6">ance Index</tspan></text>
<text x="881.5" y="394.0" text-anchor="start" fill="#e6e6e6" font-size="15.5">Inst<tspan dx="0.6">ance Index</tspan></text>
<path d="M866.5,380.6 L874.9,389 L866.5,397.4 L858.1,389 Z" fill="#111"/>
<path d="M866.5,381.8 L873.7,389 L866.5,396.2 L859.3,389 Z" fill="#598c5c"/>
<text x="881.5" y="427.0" text-anchor="start" fill="#000" fill-opacity="0.55" font-size="15.5">Rot<tspan dx="0.6">at<tspan dx="0.6">ion:</tspan></tspan></text>
<text x="881.5" y="426.0" text-anchor="start" fill="#e6e6e6" font-size="15.5">Rot<tspan dx="0.6">at<tspan dx="0.6">ion:</tspan></tspan></text>
<path d="M866.5,412.6 L874.9,421 L866.5,429.4 L858.1,421 Z" fill="#111"/>
<path d="M866.5,413.8 L873.7,421 L866.5,428.2 L859.3,421 Z" fill="#6363c7"/>
<circle cx="866.5" cy="421" r="1.7" fill="#111"/>
<rect x="880.5" y="434.5" width="156.5" height="86" rx="5" fill="#3d3d3d"/>
<rect x="882" y="436" width="153.5" height="83" rx="4" fill="#545454"/>
<rect x="882" y="462.6666666666667" width="153.5" height="2" fill="#3a3a3a"/>
<rect x="882" y="490.3333333333333" width="153.5" height="2" fill="#3a3a3a"/>
<text x="903.5" y="454.6" text-anchor="start" fill="#000" fill-opacity="0.55" font-size="15.5">X</text>
<text x="903.5" y="453.6" text-anchor="start" fill="#e6e6e6" font-size="15.5">X</text>
<text x="1016.5" y="454.6" text-anchor="end" fill="#000" fill-opacity="0.55" font-size="15.5">0°</text>
<text x="1016.5" y="453.6" text-anchor="end" fill="#e6e6e6" font-size="15.5">0°</text>
<text x="903.5" y="482.3" text-anchor="start" fill="#000" fill-opacity="0.55" font-size="15.5">Y</text>
<text x="903.5" y="481.3" text-anchor="start" fill="#e6e6e6" font-size="15.5">Y</text>
<text x="1016.5" y="482.3" text-anchor="end" fill="#000" fill-opacity="0.55" font-size="15.5">0°</text>
<text x="1016.5" y="481.3" text-anchor="end" fill="#e6e6e6" font-size="15.5">0°</text>
<text x="903.5" y="510.0" text-anchor="start" fill="#000" fill-opacity="0.55" font-size="15.5">Z</text>
<text x="903.5" y="509.0" text-anchor="start" fill="#e6e6e6" font-size="15.5">Z</text>
<text x="1016.5" y="510.0" text-anchor="end" fill="#000" fill-opacity="0.55" font-size="15.5">0°</text>
<text x="1016.5" y="509.0" text-anchor="end" fill="#e6e6e6" font-size="15.5">0°</text>
<text x="881.5" y="542.5" text-anchor="start" fill="#000" fill-opacity="0.55" font-size="15.5">Scale:</text>
<text x="881.5" y="541.5" text-anchor="start" fill="#e6e6e6" font-size="15.5">Scale:</text>
<path d="M866.5,528.1 L874.9,536.5 L866.5,544.9 L858.1,536.5 Z" fill="#111"/>
<path d="M866.5,529.3 L873.7,536.5 L866.5,543.7 L859.3,536.5 Z" fill="#6363c7"/>
<circle cx="866.5" cy="536.5" r="1.7" fill="#111"/>
<rect x="880.5" y="550.5" width="156.5" height="85" rx="5" fill="#3d3d3d"/>
<rect x="882" y="552" width="153.5" height="82" rx="4" fill="#545454"/>
<rect x="882" y="578.3333333333334" width="153.5" height="2" fill="#3a3a3a"/>
<rect x="882" y="605.6666666666666" width="153.5" height="2" fill="#3a3a3a"/>
<text x="903.5" y="570.5" text-anchor="start" fill="#000" fill-opacity="0.55" font-size="15.5">X</text>
<text x="903.5" y="569.5" text-anchor="start" fill="#e6e6e6" font-size="15.5">X</text>
<text x="1016.5" y="570.5" text-anchor="end" fill="#000" fill-opacity="0.55" font-size="15.5">0.020</text>
<text x="1016.5" y="569.5" text-anchor="end" fill="#e6e6e6" font-size="15.5">0.020</text>
<text x="903.5" y="597.8" text-anchor="start" fill="#000" fill-opacity="0.55" font-size="15.5">Y</text>
<text x="903.5" y="596.8" text-anchor="start" fill="#e6e6e6" font-size="15.5">Y</text>
<text x="1016.5" y="597.8" text-anchor="end" fill="#000" fill-opacity="0.55" font-size="15.5">0.020</text>
<text x="1016.5" y="596.8" text-anchor="end" fill="#e6e6e6" font-size="15.5">0.020</text>
<text x="903.5" y="625.1" text-anchor="start" fill="#000" fill-opacity="0.55" font-size="15.5">Z</text>
<text x="903.5" y="624.1" text-anchor="start" fill="#e6e6e6" font-size="15.5">Z</text>
<text x="1016.5" y="625.1" text-anchor="end" fill="#000" fill-opacity="0.55" font-size="15.5">0.020</text>
<text x="1016.5" y="624.1" text-anchor="end" fill="#e6e6e6" font-size="15.5">0.020</text>
<rect x="620.5" y="377" width="189.5" height="397" rx="7.5" fill="#000" opacity="0.55" filter="url(#sh)"/>
<rect x="622.0" y="377.5" width="186.5" height="395" rx="6.0" fill="#101010" opacity="0.8"/>
<rect x="623.5" y="379" width="183.5" height="392" rx="4.5" fill="#303030"/>
<path d="M623.5,407 L623.5,383.5 Q623.5,379 628.0,379 L802.5,379 Q807,379 807,383.5 L807,407 Z" fill="#1d725e"/>
<rect x="623.5" y="406.5" width="183.5" height="1" fill="#000" opacity="0.18"/>
<path d="M638.3,389.5 L644.3,396.1 L650.3,389.5" stroke="#dcdcdc" stroke-width="1.3" fill="none"/>
<text x="658.5" y="398.3" text-anchor="start" fill="#000" fill-opacity="0.55" font-size="15.5">Cone</text>
<text x="658.5" y="397.3" text-anchor="start" fill="#e6e6e6" font-size="15.5">Cone</text>
<text x="791.0" y="433.0" text-anchor="end" fill="#000" fill-opacity="0.55" font-size="15.5">Mesh</text>
<text x="791.0" y="432.0" text-anchor="end" fill="#e6e6e6" font-size="15.5">Mesh</text>
<circle cx="808" cy="427" r="6.9" fill="#0c0c0c"/>
<circle cx="808" cy="427" r="5.7" fill="#00d6a3"/>
<text x="791.0" y="464.5" text-anchor="end" fill="#000" fill-opacity="0.55" font-size="15.5">Top</text>
<text x="791.0" y="463.5" text-anchor="end" fill="#e6e6e6" font-size="15.5">Top</text>
<path d="M808,450.1 L816.4,458.5 L808,466.9 L799.6,458.5 Z" fill="#111"/>
<path d="M808,451.3 L815.2,458.5 L808,465.7 L800.8,458.5 Z" fill="#cca6d6"/>
<text x="791.0" y="496.0" text-anchor="end" fill="#000" fill-opacity="0.55" font-size="15.5">Bot<tspan dx="0.6">t<tspan dx="0.6">om</tspan></tspan></text>
<text x="791.0" y="495.0" text-anchor="end" fill="#e6e6e6" font-size="15.5">Bot<tspan dx="0.6">t<tspan dx="0.6">om</tspan></tspan></text>
<path d="M808,481.6 L816.4,490 L808,498.4 L799.6,490 Z" fill="#111"/>
<path d="M808,482.8 L815.2,490 L808,497.2 L800.8,490 Z" fill="#cca6d6"/>
<text x="791.0" y="527.0" text-anchor="end" fill="#000" fill-opacity="0.55" font-size="15.5">Side</text>
<text x="791.0" y="526.0" text-anchor="end" fill="#e6e6e6" font-size="15.5">Side</text>
<path d="M808,512.6 L816.4,521 L808,529.4 L799.6,521 Z" fill="#111"/>
<path d="M808,513.8 L815.2,521 L808,528.2 L800.8,521 Z" fill="#cca6d6"/>
<text x="637.0" y="569.0" text-anchor="start" fill="#000" fill-opacity="0.55" font-size="15.5">Fill Typ</text>
<text x="637.0" y="568.0" text-anchor="start" fill="#e6e6e6" font-size="15.5">Fill Typ</text>
<rect x="706.2" y="549.9" width="85.29999999999995" height="25.800000000000068" rx="5" fill="#282828" stroke="#3d3d3d" stroke-width="1.8"/>
<text x="715.7" y="568.8" text-anchor="start" fill="#000" fill-opacity="0.55" font-size="15.5">N-Gon</text>
<text x="715.7" y="567.8" text-anchor="start" fill="#e6e6e6" font-size="15.5">N-Gon</text>
<path d="M778.8,560.5 L783,564.8 L787.2,560.5" stroke="#e6e6e6" stroke-width="1.5" fill="none"/>
<rect x="636.5" y="583.3" width="156.5" height="28" rx="5" fill="#3d3d3d"/>
<rect x="638" y="584.8" width="153.5" height="25" rx="4" fill="#545454"/>
<text x="659.0" y="603.3" text-anchor="start" fill="#000" fill-opacity="0.55" font-size="15.5">Vert<tspan dx="0.6">ices</tspan></text>
<text x="659.0" y="602.3" text-anchor="start" fill="#e6e6e6" font-size="15.5">Vert<tspan dx="0.6">ices</tspan></text>
<text x="772.5" y="603.3" text-anchor="end" fill="#000" fill-opacity="0.55" font-size="15.5">32</text>
<text x="772.5" y="602.3" text-anchor="end" fill="#e6e6e6" font-size="15.5">32</text>
<circle cx="623" cy="597.3" r="6.9" fill="#0c0c0c"/>
<circle cx="623" cy="597.3" r="5.7" fill="#598c5c"/>
<rect x="636.5" y="614.5" width="156.5" height="28" rx="5" fill="#3d3d3d"/>
<rect x="638" y="616.0" width="153.5" height="25" rx="4" fill="#545454"/>
<text x="659.0" y="634.5" text-anchor="start" fill="#000" fill-opacity="0.55" font-size="15.5">Side Segment</text>
<text x="659.0" y="633.5" text-anchor="start" fill="#e6e6e6" font-size="15.5">Side Segment</text>
<text x="772.5" y="634.5" text-anchor="end" fill="#000" fill-opacity="0.55" font-size="15.5">1</text>
<text x="772.5" y="633.5" text-anchor="end" fill="#e6e6e6" font-size="15.5">1</text>
<circle cx="623" cy="628.5" r="6.9" fill="#0c0c0c"/>
<circle cx="623" cy="628.5" r="5.7" fill="#598c5c"/>
<rect x="636.5" y="645.5" width="156.5" height="28" rx="5" fill="#3d3d3d"/>
<rect x="638" y="647.0" width="153.5" height="25" rx="4" fill="#545454"/>
<text x="659.0" y="665.5" text-anchor="start" fill="#000" fill-opacity="0.55" font-size="15.5">Fill Segment<tspan dx="0.6">s</tspan></text>
<text x="659.0" y="664.5" text-anchor="start" fill="#e6e6e6" font-size="15.5">Fill Segment<tspan dx="0.6">s</tspan></text>
<text x="772.5" y="665.5" text-anchor="end" fill="#000" fill-opacity="0.55" font-size="15.5">1</text>
<text x="772.5" y="664.5" text-anchor="end" fill="#e6e6e6" font-size="15.5">1</text>
<circle cx="623" cy="659.5" r="6.9" fill="#0c0c0c"/>
<circle cx="623" cy="659.5" r="5.7" fill="#598c5c"/>
<rect x="636.5" y="676.5" width="156.5" height="28" rx="5" fill="#3d3d3d"/>
<rect x="638" y="678.0" width="153.5" height="25" rx="4" fill="#545454"/>
<text x="659.0" y="696.5" text-anchor="start" fill="#000" fill-opacity="0.55" font-size="15.5">Radius Top</text>
<text x="659.0" y="695.5" text-anchor="start" fill="#e6e6e6" font-size="15.5">Radius Top</text>
<text x="772.5" y="696.5" text-anchor="end" fill="#000" fill-opacity="0.55" font-size="15.5">0 m</text>
<text x="772.5" y="695.5" text-anchor="end" fill="#e6e6e6" font-size="15.5">0 m</text>
<circle cx="623" cy="690.5" r="6.9" fill="#0c0c0c"/>
<circle cx="623" cy="690.5" r="5.7" fill="#a1a1a1"/>
<rect x="636.5" y="707.5" width="156.5" height="28" rx="5" fill="#3d3d3d"/>
<rect x="638" y="709.0" width="153.5" height="25" rx="4" fill="#545454"/>
<text x="659.0" y="727.5" text-anchor="start" fill="#000" fill-opacity="0.55" font-size="15.5">Radius Bot<tspan dx="0.6">t</tspan></text>
<text x="659.0" y="726.5" text-anchor="start" fill="#e6e6e6" font-size="15.5">Radius Bot<tspan dx="0.6">t</tspan></text>
<text x="772.5" y="727.5" text-anchor="end" fill="#000" fill-opacity="0.55" font-size="15.5">1 m</text>
<text x="772.5" y="726.5" text-anchor="end" fill="#e6e6e6" font-size="15.5">1 m</text>
<circle cx="623" cy="721.5" r="6.9" fill="#0c0c0c"/>
<circle cx="623" cy="721.5" r="5.7" fill="#a1a1a1"/>
<rect x="636.5" y="738.0" width="156.5" height="28" rx="5" fill="#3d3d3d"/>
<rect x="638" y="739.5" width="153.5" height="25" rx="4" fill="#545454"/>
<text x="659.0" y="758.0" text-anchor="start" fill="#000" fill-opacity="0.55" font-size="15.5">Dept<tspan dx="0.6">h</tspan></text>
<text x="659.0" y="757.0" text-anchor="start" fill="#e6e6e6" font-size="15.5">Dept<tspan dx="0.6">h</tspan></text>
<text x="772.5" y="758.0" text-anchor="end" fill="#000" fill-opacity="0.55" font-size="15.5">2 m</text>
<text x="772.5" y="757.0" text-anchor="end" fill="#e6e6e6" font-size="15.5">2 m</text>
<circle cx="623" cy="752" r="6.9" fill="#0c0c0c"/>
<circle cx="623" cy="752" r="5.7" fill="#a1a1a1"/>
<rect x="1098" y="664" width="189" height="283.5" rx="7.5" fill="#000" opacity="0.55" filter="url(#sh)"/>
<rect x="1099.5" y="664.5" width="186" height="281.5" rx="6.0" fill="#101010" opacity="0.8"/>
<rect x="1101" y="666" width="183" height="278.5" rx="4.5" fill="#303030"/>
<path d="M1101,694 L1101,670.5 Q1101,666 1105.5,666 L1279.5,666 Q1284,666 1284,670.5 L1284,694 Z" fill="#1d725e"/>
<rect x="1101" y="693.5" width="183" height="1" fill="#000" opacity="0.18"/>
<path d="M1115.8,676.5 L1121.8,683.0999999999999 L1127.8,676.5" stroke="#dcdcdc" stroke-width="1.3" fill="none"/>
<text x="1136.0" y="685.3" text-anchor="start" fill="#000" fill-opacity="0.55" font-size="15.5">Set<tspan dx="0.6"> Posit<tspan dx="0.6">ion</tspan></tspan></text>
<text x="1136.0" y="684.3" text-anchor="start" fill="#e6e6e6" font-size="15.5">Set<tspan dx="0.6"> Posit<tspan dx="0.6">ion</tspan></tspan></text>
<text x="1268.0" y="720.0" text-anchor="end" fill="#000" fill-opacity="0.55" font-size="15.5">Geomet<tspan dx="0.6">ry</tspan></text>
<text x="1268.0" y="719.0" text-anchor="end" fill="#e6e6e6" font-size="15.5">Geomet<tspan dx="0.6">ry</tspan></text>
<circle cx="1285" cy="714" r="6.9" fill="#0c0c0c"/>
<circle cx="1285" cy="714" r="5.7" fill="#00d6a3"/>
<text x="1115.5" y="755.0" text-anchor="start" fill="#000" fill-opacity="0.55" font-size="15.5">Geomet<tspan dx="0.6">ry</tspan></text>
<text x="1115.5" y="754.0" text-anchor="start" fill="#e6e6e6" font-size="15.5">Geomet<tspan dx="0.6">ry</tspan></text>
<circle cx="1100.5" cy="749" r="6.9" fill="#0c0c0c"/>
<circle cx="1100.5" cy="749" r="5.7" fill="#00d6a3"/>
<text x="1115.5" y="786.0" text-anchor="start" fill="#000" fill-opacity="0.55" font-size="15.5">Select<tspan dx="0.6">ion</tspan></text>
<text x="1115.5" y="785.0" text-anchor="start" fill="#e6e6e6" font-size="15.5">Select<tspan dx="0.6">ion</tspan></text>
<path d="M1100.5,771.6 L1108.9,780 L1100.5,788.4 L1092.1,780 Z" fill="#111"/>
<path d="M1100.5,772.8 L1107.7,780 L1100.5,787.2 L1093.3,780 Z" fill="#cca6d6"/>
<circle cx="1100.5" cy="780" r="1.7" fill="#111"/>
<text x="1115.5" y="816.0" text-anchor="start" fill="#000" fill-opacity="0.55" font-size="15.5">Posit<tspan dx="0.6">ion</tspan></text>
<text x="1115.5" y="815.0" text-anchor="start" fill="#e6e6e6" font-size="15.5">Posit<tspan dx="0.6">ion</tspan></text>
<path d="M1100.5,801.6 L1108.9,810 L1100.5,818.4 L1092.1,810 Z" fill="#111"/>
<path d="M1100.5,802.8 L1107.7,810 L1100.5,817.2 L1093.3,810 Z" fill="#6363c7"/>
<text x="1115.5" y="846.5" text-anchor="start" fill="#000" fill-opacity="0.55" font-size="15.5">Offset<tspan dx="0.6">:</tspan></text>
<text x="1115.5" y="845.5" text-anchor="start" fill="#e6e6e6" font-size="15.5">Offset<tspan dx="0.6">:</tspan></text>
<path d="M1100.5,832.1 L1108.9,840.5 L1100.5,848.9 L1092.1,840.5 Z" fill="#111"/>
<path d="M1100.5,833.3 L1107.7,840.5 L1100.5,847.7 L1093.3,840.5 Z" fill="#6363c7"/>
<circle cx="1100.5" cy="840.5" r="1.7" fill="#111"/>
<rect x="1113.5" y="854.5" width="156.5" height="84.5" rx="5" fill="#3d3d3d"/>
<rect x="1115" y="856" width="153.5" height="81.5" rx="4" fill="#545454"/>
<rect x="1115" y="882.1666666666666" width="153.5" height="2" fill="#3a3a3a"/>
<rect x="1115" y="909.3333333333334" width="153.5" height="2" fill="#3a3a3a"/>
<text x="1136.5" y="874.4" text-anchor="start" fill="#000" fill-opacity="0.55" font-size="15.5">X</text>
<text x="1136.5" y="873.4" text-anchor="start" fill="#e6e6e6" font-size="15.5">X</text>
<text x="1249.5" y="874.4" text-anchor="end" fill="#000" fill-opacity="0.55" font-size="15.5">0 m</text>
<text x="1249.5" y="873.4" text-anchor="end" fill="#e6e6e6" font-size="15.5">0 m</text>
<text x="1136.5" y="901.5" text-anchor="start" fill="#000" fill-opacity="0.55" font-size="15.5">Y</text>
<text x="1136.5" y="900.5" text-anchor="start" fill="#e6e6e6" font-size="15.5">Y</text>
<text x="1249.5" y="901.5" text-anchor="end" fill="#000" fill-opacity="0.55" font-size="15.5">0 m</text>
<text x="1249.5" y="900.5" text-anchor="end" fill="#e6e6e6" font-size="15.5">0 m</text>
<text x="1136.5" y="928.7" text-anchor="start" fill="#000" fill-opacity="0.55" font-size="15.5">Z</text>
<text x="1136.5" y="927.7" text-anchor="start" fill="#e6e6e6" font-size="15.5">Z</text>
<text x="1249.5" y="928.7" text-anchor="end" fill="#000" fill-opacity="0.55" font-size="15.5">0 m</text>
<text x="1249.5" y="927.7" text-anchor="end" fill="#e6e6e6" font-size="15.5">0 m</text>
<rect x="1513" y="264" width="190" height="108" rx="7.5" fill="#000" opacity="0.55" filter="url(#sh)"/>
<rect x="1514.5" y="264.5" width="187" height="106" rx="6.0" fill="#101010" opacity="0.8"/>
<rect x="1516" y="266" width="184" height="103" rx="4.5" fill="#303030"/>
<path d="M1516,294 L1516,270.5 Q1516,266 1520.5,266 L1695.5,266 Q1700,266 1700,270.5 L1700,294 Z" fill="#1d725e"/>
<rect x="1516" y="293.5" width="184" height="1" fill="#000" opacity="0.18"/>
<path d="M1530.8,276.5 L1536.8,283.1 L1542.8,276.5" stroke="#dcdcdc" stroke-width="1.3" fill="none"/>
<text x="1551.0" y="285.3" text-anchor="start" fill="#000" fill-opacity="0.55" font-size="15.5">Join Geomet<tspan dx="0.6">ry</tspan></text>
<text x="1551.0" y="284.3" text-anchor="start" fill="#e6e6e6" font-size="15.5">Join Geomet<tspan dx="0.6">ry</tspan></text>
<text x="1684.0" y="320.0" text-anchor="end" fill="#000" fill-opacity="0.55" font-size="15.5">Geomet<tspan dx="0.6">ry</tspan></text>
<text x="1684.0" y="319.0" text-anchor="end" fill="#e6e6e6" font-size="15.5">Geomet<tspan dx="0.6">ry</tspan></text>
<circle cx="1701" cy="314" r="6.9" fill="#0c0c0c"/>
<circle cx="1701" cy="314" r="5.7" fill="#00d6a3"/>
<text x="1531.0" y="355.0" text-anchor="start" fill="#000" fill-opacity="0.55" font-size="15.5">Geomet<tspan dx="0.6">ry</tspan></text>
<text x="1531.0" y="354.0" text-anchor="start" fill="#e6e6e6" font-size="15.5">Geomet<tspan dx="0.6">ry</tspan></text>
<rect x="1725.7" y="262" width="189.29999999999995" height="105" rx="7.5" fill="#000" opacity="0.55" filter="url(#sh)"/>
<rect x="1727.2" y="262.5" width="186.29999999999995" height="103" rx="6.0" fill="#101010" opacity="0.8"/>
<rect x="1728.7" y="264" width="183.29999999999995" height="100" rx="4.5" fill="#303030"/>
<path d="M1728.7,293 L1728.7,268.5 Q1728.7,264 1733.2,264 L1907.5,264 Q1912,264 1912,268.5 L1912,293 Z" fill="#1c1c1c"/>
<rect x="1728.7" y="292.5" width="183.29999999999995" height="1" fill="#000" opacity="0.18"/>
<path d="M1743.5,274.5 L1749.5,281.1 L1755.5,274.5" stroke="#dcdcdc" stroke-width="1.3" fill="none"/>
<text x="1763.7" y="283.3" text-anchor="start" fill="#000" fill-opacity="0.55" font-size="15.5">Group Out<tspan dx="0.6">put</tspan></text>
<text x="1763.7" y="282.3" text-anchor="start" fill="#e6e6e6" font-size="15.5">Group Out<tspan dx="0.6">put</tspan></text>
<text x="1744.3" y="319.0" text-anchor="start" fill="#000" fill-opacity="0.55" font-size="15.5">Geomet<tspan dx="0.6">ry</tspan></text>
<text x="1744.3" y="318.0" text-anchor="start" fill="#e6e6e6" font-size="15.5">Geomet<tspan dx="0.6">ry</tspan></text>
<circle cx="1728.0" cy="313" r="6.9" fill="#0c0c0c"/>
<circle cx="1728.0" cy="313" r="5.7" fill="#00d6a3"/>
<circle cx="1728" cy="344.2" r="6" fill="none" stroke="#8a8a8a" stroke-width="1.3"/>
<path d="M588,875.1 L596.4,883.5 L588,891.9 L579.6,883.5 Z" fill="#111"/>
<path d="M588,876.3 L595.2,883.5 L588,890.7 L580.8,883.5 Z" fill="#6363c7"/>
<path d="M991,879.6 L999.4,888 L991,896.4 L982.6,888 Z" fill="#111"/>
<path d="M991,880.8 L998.2,888 L991,895.2 L983.8,888 Z" fill="#6363c7"/>
<path d="M779.5,877 L790.5,885.7 L779.5,894.5" stroke="#6363c7" stroke-width="2" fill="none"/>
<rect x="1508.5" y="336" width="13" height="27" rx="6.5" fill="#111"/>
<rect x="1509.5" y="337" width="11" height="25" rx="5.5" fill="#00d6a3"/>
</svg></body></html>
